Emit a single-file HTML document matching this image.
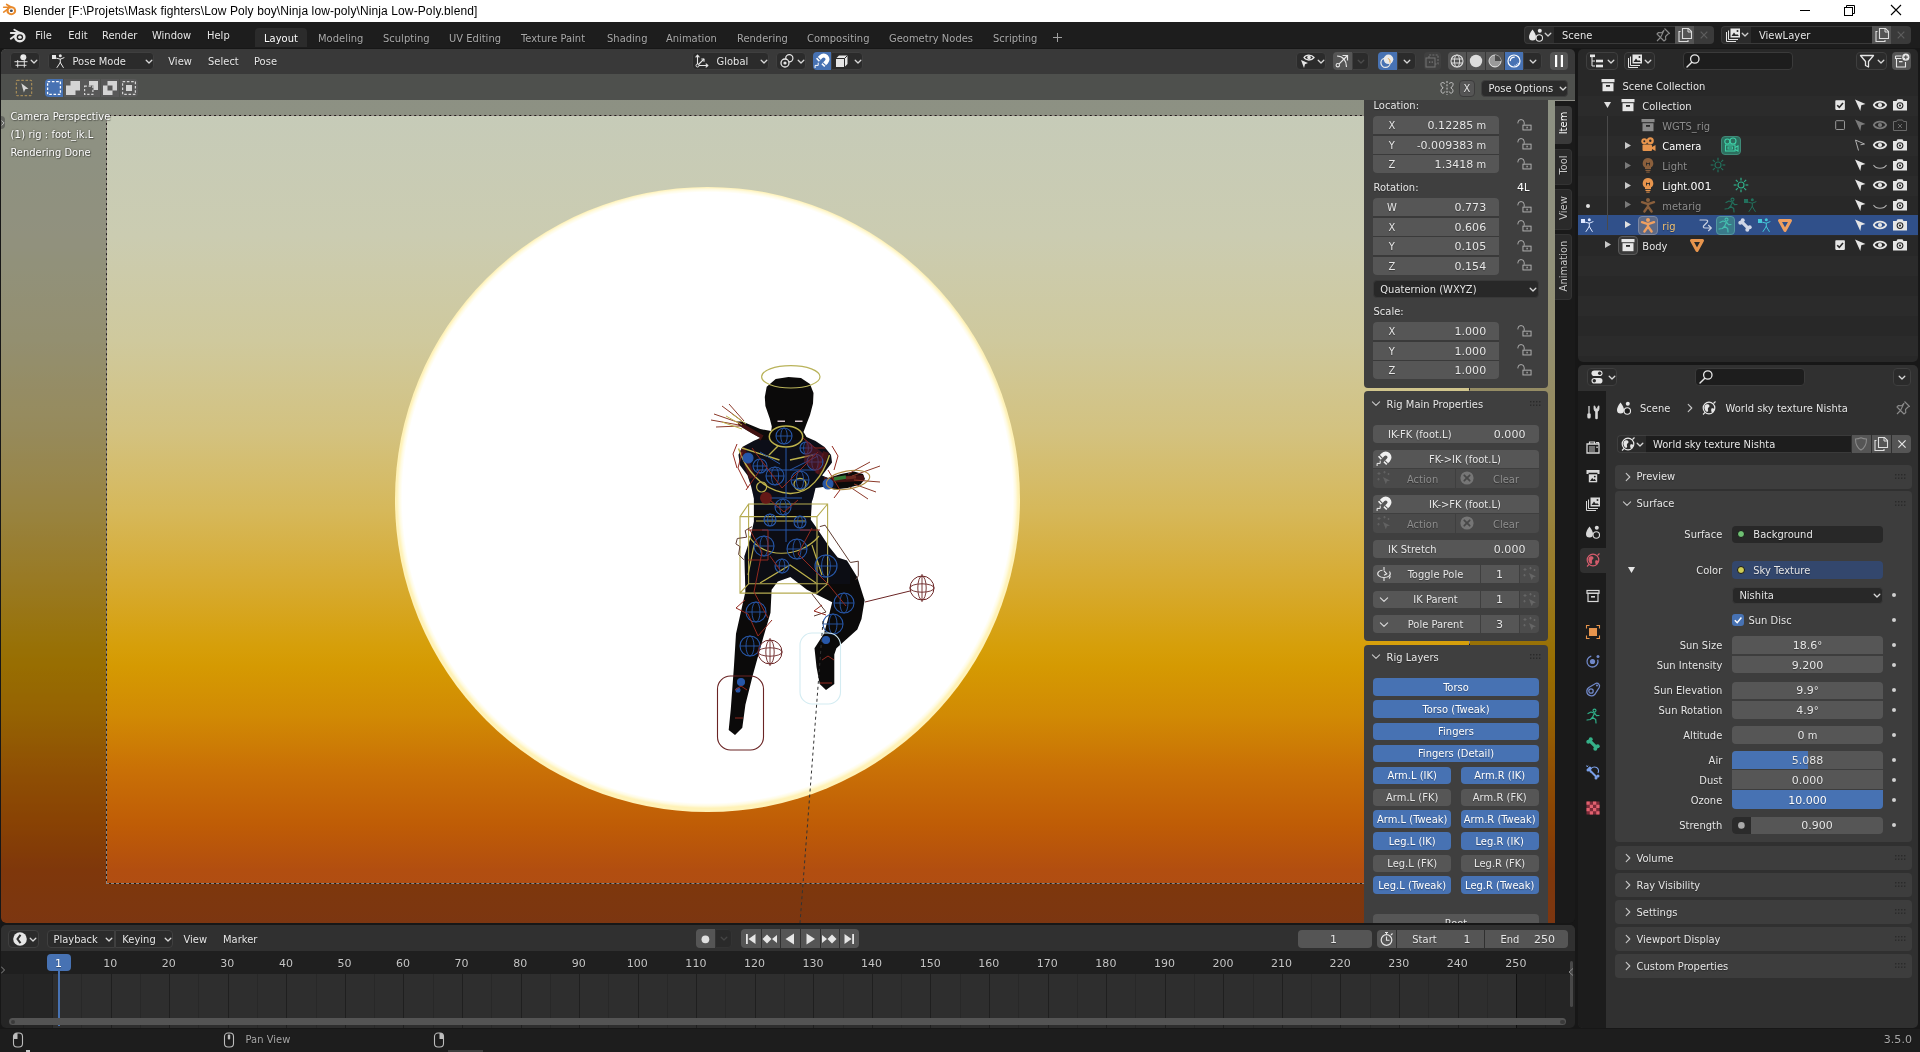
<!DOCTYPE html>
<html><head><meta charset="utf-8"><title>Blender</title>
<style>
html,body{margin:0;padding:0}
body{width:1920px;height:1052px;position:relative;overflow:hidden;background:#171717;font-family:'DejaVu Sans Condensed','DejaVu Sans',sans-serif;font-size:11px;font-stretch:condensed;color:#e6e6e6}
.a{position:absolute;box-sizing:border-box;display:block}
.n{font-family:'DejaVu Sans',sans-serif;font-stretch:normal}
.t{position:absolute;white-space:nowrap;letter-spacing:.04px;text-shadow:0 1px 1px rgba(0,0,0,.35)}
svg{overflow:visible}
</style></head><body><div id="root" style="position:absolute;left:0;top:0;width:1920px;height:1052px;will-change:transform">
<div class="a" style="left:0px;top:0px;width:1920px;height:22px;background:#ffffff;"></div><svg class="a" style="left:3.05px;top:2.85px;" width="13.5" height="13.5" viewBox="0 0 16 16"><path d="M4.3 1.7L11 5.6M0.8 5H8.500M0.8 10.800L6.300 6.800" fill="none" stroke="#e98a2c" stroke-width="1.900" stroke-linecap="round" stroke-linejoin="round"/><ellipse cx="9.800" cy="9.100" rx="5.800" ry="5.300" fill="#e98a2c"/><ellipse cx="9.900" cy="9.200" rx="3.200" ry="2.900" fill="#ffffff"/><ellipse cx="9.900" cy="9.200" rx="1.800" ry="1.600" fill="#3c4a5c"/></svg><div class="a" style="left:23px;top:1px;height:21px;line-height:21px;font-family:'Liberation Sans',sans-serif;font-size:12px;font-stretch:normal;color:#000;white-space:nowrap;letter-spacing:0.11px">Blender [F:\Projets\Mask fighters\Low Poly boy\Ninja low-poly\Ninja Low-Poly.blend]</div><svg class="a" style="left:1799px;top:4px;" width="12" height="12" viewBox="0 0 12 12"><path d="M1 6.500h10" stroke="#000" stroke-width="1"/></svg><svg class="a" style="left:1843px;top:3px;" width="14" height="14" viewBox="0 0 14 14"><rect x="1.500" y="4.500" width="8" height="8" fill="none" stroke="#000" stroke-width="1"/><path d="M3.500 4.500v-2h8v8h-2" fill="none" stroke="#000" stroke-width="1"/></svg><svg class="a" style="left:1890px;top:4px;" width="12" height="12" viewBox="0 0 12 12"><path d="M1 1l10 10M11 1L1 11" stroke="#000" stroke-width="1.100"/></svg><div class="a" style="left:0px;top:22px;width:1920px;height:26px;background:#1d1d1d;"></div><svg class="a" style="left:9.5px;top:27.5px;" width="16" height="16" viewBox="0 0 16 16"><path d="M4.3 1.7L11 5.6M0.8 5H8.500M0.8 10.800L6.300 6.800" fill="none" stroke="#e6e6e6" stroke-width="1.900" stroke-linecap="round" stroke-linejoin="round"/><ellipse cx="9.800" cy="9.100" rx="5.800" ry="5.300" fill="#e6e6e6"/><ellipse cx="9.900" cy="9.200" rx="3.200" ry="2.900" fill="#1d1d1d"/><ellipse cx="9.900" cy="9.200" rx="1.800" ry="1.600" fill="#e6e6e6"/></svg><div class="t" style="top:26.2px;height:20px;line-height:20px;left:35.3px;">File</div><div class="t" style="top:26.2px;height:20px;line-height:20px;left:68.3px;">Edit</div><div class="t" style="top:26.2px;height:20px;line-height:20px;left:102px;">Render</div><div class="t" style="top:26.2px;height:20px;line-height:20px;left:152px;">Window</div><div class="t" style="top:26.2px;height:20px;line-height:20px;left:207px;">Help</div><div class="a" style="left:255px;top:27.5px;width:52px;height:19.8px;background:#2b2b2b;border-radius:4px 4px 0 0;"></div><div class="t" style="top:29.3px;height:20px;line-height:20px;left:264px;color:#ffffff;">Layout</div><div class="t" style="top:29.3px;height:20px;line-height:20px;left:318px;color:#a8a8a8;">Modeling</div><div class="t" style="top:29.3px;height:20px;line-height:20px;left:383px;color:#a8a8a8;">Sculpting</div><div class="t" style="top:29.3px;height:20px;line-height:20px;left:449px;color:#a8a8a8;">UV Editing</div><div class="t" style="top:29.3px;height:20px;line-height:20px;left:521px;color:#a8a8a8;">Texture Paint</div><div class="t" style="top:29.3px;height:20px;line-height:20px;left:607px;color:#a8a8a8;">Shading</div><div class="t" style="top:29.3px;height:20px;line-height:20px;left:666px;color:#a8a8a8;">Animation</div><div class="t" style="top:29.3px;height:20px;line-height:20px;left:737px;color:#a8a8a8;">Rendering</div><div class="t" style="top:29.3px;height:20px;line-height:20px;left:807px;color:#a8a8a8;">Compositing</div><div class="t" style="top:29.3px;height:20px;line-height:20px;left:889px;color:#a8a8a8;">Geometry Nodes</div><div class="t" style="top:29.3px;height:20px;line-height:20px;left:993px;color:#a8a8a8;">Scripting</div><svg class="a" style="left:1051.5px;top:32px;" width="11" height="11" viewBox="0 0 11 11"><path d="M5.500 1v9M1 5.500h9" stroke="#a0a0a0" stroke-width="1"/></svg><div class="a" style="left:1524px;top:26px;width:30px;height:18px;background:#2b2b2b;border-radius:4px 0 0 4px;border:1px solid #3a3a3a;border-right:none;"></div><svg class="a" style="left:1527.5px;top:27px;" width="16" height="16" viewBox="0 0 16 16"><path d="M4.500 1.500C7 5 8 7 8 9a3.500 3.500 0 0 1-7 0c0-2 1-4 3.500-7.500z" fill="#e6e6e6" transform="translate(0 1)"/><circle cx="11.800" cy="3.800" r="2" fill="#e6e6e6"/><circle cx="11.300" cy="11" r="3.200" fill="#1d1d1d" stroke="#e6e6e6" stroke-width="1.100"/></svg><svg class="a" style="left:1542.5px;top:31.3px;" width="10" height="8" viewBox="0 0 10 8"><path d="M2.2 2.2L5 5.0L7.8 2.2" fill="none" stroke="#d0d0d0" stroke-width="1.3" stroke-linecap="round" stroke-linejoin="round"/></svg><div class="a" style="left:1554px;top:26px;width:120.5px;height:18px;background:#1d1d1d;border:1px solid #3a3a3a;border-left:none;border-right:none;"></div><div class="t" style="top:26px;height:20px;line-height:20px;left:1562px;">Scene</div><svg class="a" style="left:1654.5px;top:27px;" width="16" height="16" viewBox="0 0 16 16"><path d="M9.500 1.500l5 5-1.500.5-2.500 2.500.3 3L9 14 5.500 10.500 2 14M5.500 10.500L2 7l1.500-1.500 3 .3L9 3.300z" fill="none" stroke="#8a8a8a" stroke-width="1.100" stroke-linejoin="round"/></svg><div class="a" style="left:1674.5px;top:26px;width:19.5px;height:18px;background:#545454;"></div><svg class="a" style="left:1676.5px;top:27px;" width="16" height="16" viewBox="0 0 16 16"><path d="M5.500 1.500h6l3 3v7h-9z" fill="none" stroke="#dddddd" stroke-width="1.100"/><path d="M11 1.500v3.500h3.500" fill="none" stroke="#dddddd" stroke-width="1"/><path d="M3.500 4.500H2v10h9v-1.500" fill="none" stroke="#dddddd" stroke-width="1.100"/></svg><div class="a" style="left:1694.3px;top:26px;width:19.5px;height:18px;background:#3a3a3a;border-radius:0 4px 4px 0;"></div><svg class="a" style="left:1696px;top:27px;" width="16" height="16" viewBox="0 0 16 16"><path d="M4.7 4.7L11.3 11.3M11.3 4.7L4.7 11.3" stroke="#5e5e5e" stroke-width="1.2"/></svg><div class="a" style="left:1721px;top:26px;width:30px;height:18px;background:#2b2b2b;border-radius:4px 0 0 4px;border:1px solid #3a3a3a;border-right:none;"></div><svg class="a" style="left:1724.5px;top:27px;" width="16" height="16" viewBox="0 0 16 16"><path d="M1.500 5v9.500H11M3.500 3.500v9H13" fill="none" stroke="#e6e6e6" stroke-width="1"/><rect x="5.500" y="1.500" width="9.500" height="9" fill="#e6e6e6"/><path d="M6.500 9l2.500-3.500 2 2.500 1-1 2 2z" fill="#282828"/><circle cx="12.500" cy="4" r="1" fill="#282828"/></svg><svg class="a" style="left:1739.5px;top:31.3px;" width="10" height="8" viewBox="0 0 10 8"><path d="M2.2 2.2L5 5.0L7.8 2.2" fill="none" stroke="#d0d0d0" stroke-width="1.3" stroke-linecap="round" stroke-linejoin="round"/></svg><div class="a" style="left:1751px;top:26px;width:120.5px;height:18px;background:#1d1d1d;border:1px solid #3a3a3a;border-left:none;border-right:none;"></div><div class="t" style="top:26px;height:20px;line-height:20px;left:1759px;">ViewLayer</div><div class="a" style="left:1871.5px;top:26px;width:19.5px;height:18px;background:#545454;"></div><svg class="a" style="left:1873.5px;top:27px;" width="16" height="16" viewBox="0 0 16 16"><path d="M5.500 1.500h6l3 3v7h-9z" fill="none" stroke="#dddddd" stroke-width="1.100"/><path d="M11 1.500v3.500h3.500" fill="none" stroke="#dddddd" stroke-width="1"/><path d="M3.500 4.500H2v10h9v-1.500" fill="none" stroke="#dddddd" stroke-width="1.100"/></svg><div class="a" style="left:1891.3px;top:26px;width:19.5px;height:18px;background:#3a3a3a;border-radius:0 4px 4px 0;"></div><svg class="a" style="left:1893px;top:27px;" width="16" height="16" viewBox="0 0 16 16"><path d="M4.7 4.7L11.3 11.3M11.3 4.7L4.7 11.3" stroke="#5e5e5e" stroke-width="1.2"/></svg><div class="a" id="vp" style="left:1px;top:48.5px;width:1574px;height:874.0px;border-radius:5px;overflow:hidden;background:#1a1a1a"><div class="a" style="left:0;top:0;width:1554.5px;height:874.0px;border-radius:5px 0 0 5px;background:linear-gradient(to bottom,#c4c9b9 0px,#c6cbb8 115px,#cbccb1 235px,#cfc99d 340px,#d3c280 430px,#d6b85a 510px,#d7ab32 580px,#d69f0a 645px,#d59a02 665px,#d18a04 715px,#c97006 770px,#bf5c06 825px,#b24e10 870px,#ae4c18 923px);background-size:100% 923px;background-position:0 -48.5px"></div><div class="a" style="left:-1px;top:-48.5px;width:1920px;height:1052px"><div class="a" style="left:0px;top:48px;width:106px;height:875px;background:rgba(0,0,0,.285);"></div><div class="a" style="left:106px;top:48px;width:1500px;height:67px;background:rgba(0,0,0,.285);"></div><div class="a" style="left:106px;top:883.5px;width:1500px;height:40px;background:rgba(0,0,0,.285);"></div><div class="a" style="left:1469.5px;top:115px;width:140px;height:768.5px;background:rgba(0,0,0,.285);"></div><div class="a" style="left:105.5px;top:114.5px;width:1364.5px;height:769.5px;border:1px solid #1e1a18;"></div><div class="a" style="left:105.5px;top:114.5px;width:1364.5px;height:769.5px;border:1px dashed rgba(255,244,236,.5);"></div><div class="a" style="left:395.2px;top:187.3px;width:624.6px;height:624.6px;border-radius:50%;background:radial-gradient(circle closest-side at 50% 49.700%,#fff 0,#fff 98.300%,#fffbe2 99.200%,#fff2b8 100%)"></div><svg class="a" style="left:0px;top:0px;" width="1920" height="1052" viewBox="0 0 1920 1052"><path d="M788.5 377 L801 378 L810 384 L813.5 393 L813 403.5 L810 415 L806.5 424 L803.5 432 L806.5 437 L815.5 441 L824.5 447 L831 455 L832 462.5 L827 469 L822 475.5 L828 478 L841 474 L854 471.5 L863 474 L865 479 L860.5 484.5 L847.5 488 L834.5 489.5 L823 487 L815.5 488 L813 498.5 L811.8 501.7 L810.8 519.7 L817.7 529.6 L829.7 547.6 L837.7 557.6 L846.9 560.5 L857.3 577.2 L864.6 600.2 L861.5 619 L857.3 629.5 L836.4 648.3 L834.3 654.6 L834.3 683.9 L826 690 L819.7 683.9 L816.5 667 L814.5 648.3 L823.9 633.7 L828 619 L832.2 602.3 L807 589.7 L790.4 577 L777.8 581.4 L771.6 589.7 L770.5 612.7 L763.2 637.8 L752.7 675.5 L745.4 704.8 L742.3 727.8 L735 735 L728.7 730 L730.8 709 L733.9 667 L736 633.7 L745.4 591.8 L744.4 556.3 L749.9 539.6 L753.9 521.7 L753.9 498.4 L751.3 487 L747.5 475.3 L739.8 465 L738.5 454.8 L742.3 447.1 L753.9 440.7 L760.3 438.1 L751.3 433 L738.5 425.3 L737.2 421.4 L742.3 421.4 L751.3 425.3 L760.3 429.1 L771.2 431.1 L771.8 426.6 L769.9 418.9 L765.4 406 L764.8 397.1 L766.7 386.8 L775.7 379.1 Z" fill="#0b0a0a"/><clipPath id="bd"><path d="M788.5 377 L801 378 L810 384 L813.5 393 L813 403.5 L810 415 L806.5 424 L803.5 432 L806.5 437 L815.5 441 L824.5 447 L831 455 L832 462.5 L827 469 L822 475.5 L828 478 L841 474 L854 471.5 L863 474 L865 479 L860.5 484.5 L847.5 488 L834.5 489.5 L823 487 L815.5 488 L813 498.5 L811.8 501.7 L810.8 519.7 L817.7 529.6 L829.7 547.6 L837.7 557.6 L846.9 560.5 L857.3 577.2 L864.6 600.2 L861.5 619 L857.3 629.5 L836.4 648.3 L834.3 654.6 L834.3 683.9 L826 690 L819.7 683.9 L816.5 667 L814.5 648.3 L823.9 633.7 L828 619 L832.2 602.3 L807 589.7 L790.4 577 L777.8 581.4 L771.6 589.7 L770.5 612.7 L763.2 637.8 L752.7 675.5 L745.4 704.8 L742.3 727.8 L735 735 L728.7 730 L730.8 709 L733.9 667 L736 633.7 L745.4 591.8 L744.4 556.3 L749.9 539.6 L753.9 521.7 L753.9 498.4 L751.3 487 L747.5 475.3 L739.8 465 L738.5 454.8 L742.3 447.1 L753.9 440.7 L760.3 438.1 L751.3 433 L738.5 425.3 L737.2 421.4 L742.3 421.4 L751.3 425.3 L760.3 429.1 L771.2 431.1 L771.8 426.6 L769.9 418.9 L765.4 406 L764.8 397.1 L766.7 386.8 L775.7 379.1 Z"/></clipPath><g clip-path="url(#bd)"><path d="M736 440h100v70h-100z" fill="#12245a" opacity=".18"/><path d="M740 518h110v66h-110z" fill="#14224c" opacity=".16"/><path d="M742 448l10 30M826 452l-8 22M762 438l-24-14M824 480l40-2" stroke="#5a1614" stroke-width="6" opacity=".7" fill="none"/></g><path d="M777.500 421.300h7.500M795 421.300h7.500" stroke="#d8c4cc" stroke-width="1.400"/><ellipse cx="790.800" cy="376.800" rx="29.200" ry="11.200" fill="none" stroke="#b9b35a" stroke-width="1.200"/><ellipse cx="786" cy="436.500" rx="16.700" ry="10.500" fill="none" stroke="#bdb24c" stroke-width="1.500"/><path d="M738.500 448.500C745 468 762 492 790 493.500c20 .5 33-18 39.500-38.500M742 448l37.500 12M778 446l-9 9M790 460l23-5" fill="none" stroke="#bdb24c" stroke-width="1.400"/><circle cx="761.600" cy="487" r="5" fill="none" stroke="#bdb24c" stroke-width="1.200"/><circle cx="800" cy="484.300" r="6" fill="none" stroke="#bdb24c" stroke-width="1.200"/><path d="M740 516.600h77v76.500h-77zM748.600 504h79v79.800h-79zM740 516.600l8.600-12.600M817 516.600l10.600-12.600M740 593l8.600-9.200M817 593l10.600-9.200" fill="none" stroke="#b5ab50" stroke-width="1.100"/><path d="M819.800 526.600l5.300-1.400 25.300 37.300 7.900-1.300v14.600l-2.600 4M751.900 526.600l-6.700 4 1.400 6.600-9.300 1.300-1.400 5.400 4 2.600-1.300 8 5.300 5.300M812 594l14 18-12 4" fill="none" stroke="#5e3c32" stroke-width="1"/><path d="M749 536c12 22 50 24 70 0M754 545l-6 30M812 545l10 30M760 583l30-18 26 18M756 521h50" fill="none" stroke="#bdb24c" stroke-width="1.200"/><circle cx="784" cy="436" r="8" fill="none" stroke="#2757a8" stroke-width="1.100"/><ellipse cx="784" cy="436" rx="3.2" ry="8" fill="none" stroke="#2757a8" stroke-width=".9"/><path d="M776 436h16" stroke="#2757a8" stroke-width=".9"/><circle cx="775" cy="476" r="9" fill="none" stroke="#2757a8" stroke-width="1.100"/><ellipse cx="775" cy="476" rx="3.6" ry="9" fill="none" stroke="#2757a8" stroke-width=".9"/><path d="M766 476h18" stroke="#2757a8" stroke-width=".9"/><circle cx="800" cy="480" r="9" fill="none" stroke="#2757a8" stroke-width="1.100"/><ellipse cx="800" cy="480" rx="3.6" ry="9" fill="none" stroke="#2757a8" stroke-width=".9"/><path d="M791 480h18" stroke="#2757a8" stroke-width=".9"/><circle cx="760" cy="466" r="7" fill="none" stroke="#2757a8" stroke-width="1.100"/><ellipse cx="760" cy="466" rx="2.8" ry="7" fill="none" stroke="#2757a8" stroke-width=".9"/><path d="M753 466h14" stroke="#2757a8" stroke-width=".9"/><circle cx="815" cy="462" r="8" fill="none" stroke="#2757a8" stroke-width="1.100"/><ellipse cx="815" cy="462" rx="3.2" ry="8" fill="none" stroke="#2757a8" stroke-width=".9"/><path d="M807 462h16" stroke="#2757a8" stroke-width=".9"/><circle cx="806" cy="448" r="6" fill="none" stroke="#2757a8" stroke-width="1.100"/><ellipse cx="806" cy="448" rx="2.4" ry="6" fill="none" stroke="#2757a8" stroke-width=".9"/><path d="M800 448h12" stroke="#2757a8" stroke-width=".9"/><circle cx="783" cy="507" r="8" fill="none" stroke="#2757a8" stroke-width="1.100"/><ellipse cx="783" cy="507" rx="3.2" ry="8" fill="none" stroke="#2757a8" stroke-width=".9"/><path d="M775 507h16" stroke="#2757a8" stroke-width=".9"/><circle cx="764" cy="546" r="10" fill="none" stroke="#2757a8" stroke-width="1.100"/><ellipse cx="764" cy="546" rx="4.0" ry="10" fill="none" stroke="#2757a8" stroke-width=".9"/><path d="M754 546h20" stroke="#2757a8" stroke-width=".9"/><circle cx="797" cy="549" r="10" fill="none" stroke="#2757a8" stroke-width="1.100"/><ellipse cx="797" cy="549" rx="4.0" ry="10" fill="none" stroke="#2757a8" stroke-width=".9"/><path d="M787 549h20" stroke="#2757a8" stroke-width=".9"/><circle cx="782" cy="566" r="7" fill="none" stroke="#2757a8" stroke-width="1.100"/><ellipse cx="782" cy="566" rx="2.8" ry="7" fill="none" stroke="#2757a8" stroke-width=".9"/><path d="M775 566h14" stroke="#2757a8" stroke-width=".9"/><circle cx="826" cy="566" r="11" fill="none" stroke="#2757a8" stroke-width="1.100"/><ellipse cx="826" cy="566" rx="4.4" ry="11" fill="none" stroke="#2757a8" stroke-width=".9"/><path d="M815 566h22" stroke="#2757a8" stroke-width=".9"/><circle cx="756" cy="612" r="10" fill="none" stroke="#2757a8" stroke-width="1.100"/><ellipse cx="756" cy="612" rx="4.0" ry="10" fill="none" stroke="#2757a8" stroke-width=".9"/><path d="M746 612h20" stroke="#2757a8" stroke-width=".9"/><circle cx="750" cy="646" r="10" fill="none" stroke="#2757a8" stroke-width="1.100"/><ellipse cx="750" cy="646" rx="4.0" ry="10" fill="none" stroke="#2757a8" stroke-width=".9"/><path d="M740 646h20" stroke="#2757a8" stroke-width=".9"/><circle cx="844" cy="603" r="10" fill="none" stroke="#2757a8" stroke-width="1.100"/><ellipse cx="844" cy="603" rx="4.0" ry="10" fill="none" stroke="#2757a8" stroke-width=".9"/><path d="M834 603h20" stroke="#2757a8" stroke-width=".9"/><circle cx="833" cy="624" r="10" fill="none" stroke="#2757a8" stroke-width="1.100"/><ellipse cx="833" cy="624" rx="4.0" ry="10" fill="none" stroke="#2757a8" stroke-width=".9"/><path d="M823 624h20" stroke="#2757a8" stroke-width=".9"/><circle cx="741" cy="682" r="3.5" fill="none" stroke="#2757a8" stroke-width="1.100"/><circle cx="741" cy="682" r="3.5" fill="#2757a8"/><circle cx="826" cy="640" r="3.5" fill="none" stroke="#2757a8" stroke-width="1.100"/><circle cx="826" cy="640" r="3.5" fill="#2757a8"/><circle cx="738" cy="690" r="2" fill="none" stroke="#2757a8" stroke-width="1.100"/><circle cx="738" cy="690" r="2" fill="#2757a8"/><circle cx="770" cy="520" r="6" fill="none" stroke="#2757a8" stroke-width="1.100"/><ellipse cx="770" cy="520" rx="2.4" ry="6" fill="none" stroke="#2757a8" stroke-width=".9"/><path d="M764 520h12" stroke="#2757a8" stroke-width=".9"/><circle cx="800" cy="522" r="6" fill="none" stroke="#2757a8" stroke-width="1.100"/><ellipse cx="800" cy="522" rx="2.4" ry="6" fill="none" stroke="#2757a8" stroke-width=".9"/><path d="M794 522h12" stroke="#2757a8" stroke-width=".9"/><circle cx="748" cy="458" r="5" fill="none" stroke="#2757a8" stroke-width="1.100"/><circle cx="748" cy="458" r="5" fill="#2757a8"/><circle cx="828" cy="484" r="5" fill="none" stroke="#2757a8" stroke-width="1.100"/><circle cx="828" cy="484" r="5" fill="#2757a8"/><path d="M756 470h60M786 448v50M760 452l20 12M790 470l28-14M770 498h32M762 530h48M786 512v30" stroke="#2757a8" stroke-width="1" fill="none"/><path d="M742 452l-4 16 10 20M752 448l30 40 36-36M770 500l14 12 14-12M750 530l12 22-8 40 14 26M812 528l-14 26 30 30 18 22M745 600l-9 8 12 6 10 22 14-16M822 605l-8 6 12 4M735 690l6-4 6 4M735 718h8M822 660l6-4 6 4M820 683h12M760 470l-14 20M828 470l12 20-6 8M737 444l-4 10 4 14M832 446l6 10-4 14M803 438l12 10 10 0M748 530h20v30h-20M800 530h20M770 556l10 14" fill="none" stroke="#93291f" stroke-width="1"/><circle cx="766" cy="498" r="6" fill="#7a1c16" opacity=".8"/><path d="M806 440l18 14-6 20-14-12z" fill="#6a1a2a" opacity=".55"/><path d="M711 420l28 5M714 414l26 9M722 406l20 15M729 404l15 17M716 427l24-1" stroke="#8c3a2a" stroke-width="1"/><path d="M722 422l20 7M726 416l16 9M732 414l14 10" stroke="#bdb24c" stroke-width="1"/><path d="M852 476l28-10M854 480l26 2M854 484l22 8M850 487l18 12M848 474l22-12" stroke="#8c3a2a" stroke-width="1"/><ellipse cx="848" cy="480" rx="22" ry="9" fill="none" stroke="#b08a40" stroke-width="1.100" transform="rotate(-10 848 480)"/><path d="M834 479l12-2" stroke="#2f7a34" stroke-width="3.500"/><path d="M846 478l10-1" stroke="#6a2a20" stroke-width="3"/><circle cx="922" cy="588" r="12" fill="none" stroke="#6a2424" stroke-width="1"/><ellipse cx="922" cy="588" rx="4.2" ry="12" fill="none" stroke="#6a2424" stroke-width=".9"/><ellipse cx="922" cy="588" rx="12" ry="4.2" fill="none" stroke="#6a2424" stroke-width=".9"/><path d="M922 574v28" stroke="#6a2424" stroke-width=".9"/><circle cx="770" cy="652" r="12" fill="none" stroke="#6a2424" stroke-width="1"/><ellipse cx="770" cy="652" rx="4.2" ry="12" fill="none" stroke="#6a2424" stroke-width=".9"/><ellipse cx="770" cy="652" rx="12" ry="4.2" fill="none" stroke="#6a2424" stroke-width=".9"/><path d="M770 638v28" stroke="#6a2424" stroke-width=".9"/><path d="M865 602L910 591" stroke="#6a2424" stroke-width="1"/><rect x="717.500" y="676" width="46" height="74" rx="13" fill="none" stroke="#6a2424" stroke-width="1.100"/><rect x="800" y="633" width="40.500" height="71" rx="12" fill="none" stroke="#d4ecf2" stroke-width="1.100"/><path d="M823 621L800 923" stroke="#333" stroke-width="1" stroke-dasharray="3 3"/></svg><div class="a" style="left:0px;top:48px;width:1576px;height:26.3px;background:#393939;"></div><div class="a" style="left:0px;top:74.3px;width:1576px;height:25.9px;background:#4e504d;"></div><div class="a" style="left:10.3px;top:52px;width:29.7px;height:18px;background:#2b2b2b;border-radius:4px;border:1px solid #3f3f3f;"></div><svg class="a" style="left:12.5px;top:53px;" width="16" height="16" viewBox="0 0 16 16"><path d="M1.500 8.700h13M2.500 12.300h11M4.700 7v7.500M11.300 7v7.500" stroke="#e6e6e6" stroke-width=".95" fill="none"/><circle cx="10.300" cy="4.300" r="3" fill="#e6e6e6"/><circle cx="9.500" cy="3.500" r="1.100" fill="#ffffff" opacity=".55"/></svg><svg class="a" style="left:29.3px;top:57.6px;" width="10" height="8" viewBox="0 0 10 8"><path d="M2.2 2.2L5 5.0L7.8 2.2" fill="none" stroke="#d8d8d8" stroke-width="1.3" stroke-linecap="round" stroke-linejoin="round"/></svg><div class="a" style="left:47.5px;top:52px;width:106.5px;height:18px;background:#2b2b2b;border-radius:4px;border:1px solid #3f3f3f;"></div><svg class="a" style="left:50.5px;top:52.8px;" width="16" height="16" viewBox="0 0 16 16"><rect x="1" y="2" width="4" height="4" fill="#e6e6e6"/><circle cx="9.3" cy="2.7" r="1.5" fill="#e6e6e6"/><path d="M5.5 5.2l3.8 1 3.7-1.5M9.3 6.2v3.3M9.3 9.5l-3.3 5M9.3 9.5l3 5" stroke="#e6e6e6" stroke-width="1" fill="none" stroke-linecap="round"/></svg><div class="t" style="top:52px;height:20px;line-height:20px;left:72.5px;">Pose Mode</div><svg class="a" style="left:143.8px;top:57.6px;" width="10" height="8" viewBox="0 0 10 8"><path d="M2.2 2.2L5 5.0L7.8 2.2" fill="none" stroke="#d8d8d8" stroke-width="1.3" stroke-linecap="round" stroke-linejoin="round"/></svg><div class="t" style="top:52px;height:20px;line-height:20px;left:168.3px;">View</div><div class="t" style="top:52px;height:20px;line-height:20px;left:208px;">Select</div><div class="t" style="top:52px;height:20px;line-height:20px;left:254px;">Pose</div><div class="a" style="left:691.5px;top:52px;width:77px;height:18px;background:#2b2b2b;border-radius:4px;border:1px solid #3f3f3f;"></div><svg class="a" style="left:694px;top:53px;" width="16" height="16" viewBox="0 0 16 16"><path d="M3.5 12.5V2.5M3.5 12.5H13.5M3.5 12.5L10 6" stroke="#e6e6e6" stroke-width="1.1" fill="none"/><path d="M1.6 4.3L3.5 2 5.4 4.3M11.7 10.6l2.2 1.9-2.2 1.9M7.3 6H10v2.7" stroke="#e6e6e6" stroke-width="1.1" fill="none" stroke-linejoin="round"/><circle cx="3.5" cy="12.5" r="1.5" fill="#2b2b2b" stroke="#e6e6e6" stroke-width="1"/></svg><div class="t" style="top:52px;height:20px;line-height:20px;left:716.5px;">Global</div><svg class="a" style="left:758.5px;top:57.6px;" width="10" height="8" viewBox="0 0 10 8"><path d="M2.2 2.2L5 5.0L7.8 2.2" fill="none" stroke="#d8d8d8" stroke-width="1.3" stroke-linecap="round" stroke-linejoin="round"/></svg><div class="a" style="left:776px;top:52px;width:29.5px;height:18px;background:#2b2b2b;border-radius:4px;border:1px solid #3f3f3f;"></div><svg class="a" style="left:778.8px;top:53px;" width="16" height="16" viewBox="0 0 16 16"><circle cx="10.3" cy="5.3" r="3.6" fill="none" stroke="#e6e6e6" stroke-width="1.2"/><circle cx="6" cy="10" r="4" fill="#2b2b2b" stroke="#e6e6e6" stroke-width="1.3"/><circle cx="6" cy="10" r="1.6" fill="#e6e6e6"/></svg><svg class="a" style="left:795.5px;top:57.6px;" width="10" height="8" viewBox="0 0 10 8"><path d="M2.2 2.2L5 5.0L7.8 2.2" fill="none" stroke="#d8d8d8" stroke-width="1.3" stroke-linecap="round" stroke-linejoin="round"/></svg><div class="a" style="left:813px;top:52px;width:18px;height:18px;background:#4772b3;border-radius:4px 0 0 4px;"></div><svg class="a" style="left:814px;top:53px;" width="16" height="16" viewBox="0 0 16 16"><g transform="rotate(45 9.700 6.300)"><path d="M5.900 11.400V6.300a3.800 3.800 0 0 1 7.600 0V11.400" fill="none" stroke="#ffffff" stroke-width="4"/><path d="M3.700 9.300h4.400M11.300 9.300h4.400" stroke="#4772b3" stroke-width="1.100"/></g><path d="M1.100 15v-2.600h3.100v-2.700" fill="none" stroke="#ffffff" stroke-width="1"/></svg><div class="a" style="left:831px;top:52px;width:32px;height:18px;background:#2b2b2b;border-radius:0 4px 4px 0;border:1px solid #3f3f3f;"></div><svg class="a" style="left:834px;top:53px;" width="16" height="16" viewBox="0 0 16 16"><path d="M2 5.5h8.5V14H2z" fill="#e6e6e6"/><path d="M2 5.5L5 2.5h8.5L10.5 5.5z" fill="#e6e6e6"/><path d="M10.5 5.5l3-3V11l-3 3z" fill="#e6e6e6"/><path d="M2 5.5h8.5V14M10.5 5.5l3-3" fill="none" stroke="#2b2b2b" stroke-width="1"/></svg><svg class="a" style="left:852.5px;top:57.6px;" width="10" height="8" viewBox="0 0 10 8"><path d="M2.2 2.2L5 5.0L7.8 2.2" fill="none" stroke="#d8d8d8" stroke-width="1.3" stroke-linecap="round" stroke-linejoin="round"/></svg><div class="a" style="left:1296px;top:52px;width:30px;height:18px;background:#2b2b2b;border-radius:4px;border:1px solid #3f3f3f;"></div><svg class="a" style="left:1299px;top:53px;" width="16" height="16" viewBox="0 0 16 16"><path d="M5 4.5C7 1.2 12.5 1.2 15 4.5 12.5 7.8 7 7.8 5 4.5z" fill="none" stroke="#e6e6e6" stroke-width="1.3"/><circle cx="10" cy="4.4" r="1.8" fill="#e6e6e6"/><path d="M2 7l7 3-3 1.2L5 15z" fill="#e6e6e6"/></svg><svg class="a" style="left:1315.5px;top:57.6px;" width="10" height="8" viewBox="0 0 10 8"><path d="M2.2 2.2L5 5.0L7.8 2.2" fill="none" stroke="#d8d8d8" stroke-width="1.3" stroke-linecap="round" stroke-linejoin="round"/></svg><div class="a" style="left:1333px;top:52px;width:18.5px;height:18px;background:#555555;border-radius:4px 0 0 4px;"></div><svg class="a" style="left:1334.3px;top:53px;" width="16" height="16" viewBox="0 0 16 16"><path d="M3 3c6 0 9.5 4.5 9.5 11" fill="none" stroke="#e6e6e6" stroke-width="1.2"/><path d="M4.2 11.8L13 3M8.5 2.5h5v5" fill="none" stroke="#e6e6e6" stroke-width="1.2"/><circle cx="3.8" cy="12.2" r="1.7" fill="#505050" stroke="#e6e6e6" stroke-width="1.1"/></svg><div class="a" style="left:1351.5px;top:52px;width:17px;height:18px;background:#2b2b2b;border-radius:0 4px 4px 0;border:1px solid #3f3f3f;"></div><svg class="a" style="left:1355.5px;top:57.6px;" width="10" height="8" viewBox="0 0 10 8"><path d="M2.2 2.2L5 5.0L7.8 2.2" fill="none" stroke="#4c4c4c" stroke-width="1.3" stroke-linecap="round" stroke-linejoin="round"/></svg><div class="a" style="left:1377.5px;top:52px;width:19px;height:18px;background:#4772b3;border-radius:4px 0 0 4px;"></div><svg class="a" style="left:1379px;top:53px;" width="16" height="16" viewBox="0 0 16 16"><circle cx="9.5" cy="6.3" r="4.8" fill="#e9e9e9"/><circle cx="6.5" cy="9.8" r="4.6" fill="none" stroke="#e9e9e9" stroke-width="1.2"/><path d="M9.2 5.3a4.7 4.7 0 0 1 1.9 4.4" stroke="#e0a040" stroke-width="1" fill="none"/></svg><div class="a" style="left:1396.5px;top:52px;width:19.5px;height:18px;background:#2b2b2b;border-radius:0 4px 4px 0;border:1px solid #3f3f3f;"></div><svg class="a" style="left:1401.5px;top:57.6px;" width="10" height="8" viewBox="0 0 10 8"><path d="M2.2 2.2L5 5.0L7.8 2.2" fill="none" stroke="#d8d8d8" stroke-width="1.3" stroke-linecap="round" stroke-linejoin="round"/></svg><div class="a" style="left:1423.5px;top:52px;width:17px;height:18px;background:#404040;border-radius:4px;"></div><svg class="a" style="left:1424px;top:53px;" width="16" height="16" viewBox="0 0 16 16"><rect x="2" y="5" width="9" height="9" fill="none" stroke="#707070" stroke-width="1.1"/><path d="M5 5V2h9v9h-3" fill="none" stroke="#707070" stroke-width="1.1" stroke-dasharray="2 1.2"/><rect x="5" y="8.3" width="1.3" height="1.6" fill="#707070"/><rect x="7.6" y="8.3" width="1.3" height="1.6" fill="#707070"/></svg><div class="a" style="left:1447.8px;top:52px;width:18.1px;height:18px;background:#555555;border-radius:4px 0 0 4px;"></div><svg class="a" style="left:1449px;top:53px;" width="16" height="16" viewBox="0 0 16 16"><circle cx="8" cy="8" r="6" fill="none" stroke="#dcdcdc" stroke-width="1.1"/><ellipse cx="8" cy="8" rx="2.6" ry="6" fill="none" stroke="#dcdcdc" stroke-width="1"/><path d="M2.3 6h11.4M2.3 10h11.4" stroke="#dcdcdc" stroke-width="1" fill="none"/></svg><div class="a" style="left:1466.7px;top:52px;width:18.1px;height:18px;background:#555555;border-radius:0;"></div><svg class="a" style="left:1467.9px;top:53px;" width="16" height="16" viewBox="0 0 16 16"><circle cx="8" cy="8" r="6.2" fill="#dcdcdc"/></svg><div class="a" style="left:1485.6px;top:52px;width:18.1px;height:18px;background:#555555;border-radius:0;"></div><svg class="a" style="left:1486.8px;top:53px;" width="16" height="16" viewBox="0 0 16 16"><circle cx="8" cy="8" r="6" fill="#9a9a9a" stroke="#dcdcdc" stroke-width="1"/><path d="M8 2a6 6 0 0 1 6 6l-6 .0z" fill="#4a4a4a"/><path d="M2.5 9.5a5.6 5.6 0 0 0 8 4 7 7 0 0 1-8-4z" fill="#f0f0f0"/></svg><div class="a" style="left:1504.5px;top:52px;width:18.1px;height:18px;background:#4772b3;border-radius:0;"></div><svg class="a" style="left:1505.7px;top:53px;" width="16" height="16" viewBox="0 0 16 16"><circle cx="8" cy="8" r="6" fill="#4772b3" stroke="#fff" stroke-width="1.2"/><path d="M4.3 7.5a4 4 0 0 1 4-3.4" stroke="#fff" stroke-width="1.3" fill="none" stroke-linecap="round"/><path d="M8.5 12.8a5 5 0 0 0 4.2-4" stroke="#cfe0ff" stroke-width="1.6" fill="none" stroke-dasharray="1 1"/></svg><div class="a" style="left:1523.4px;top:52px;width:19px;height:18px;background:#2b2b2b;border-radius:0 4px 4px 0;border:1px solid #3f3f3f;"></div><svg class="a" style="left:1528px;top:57.6px;" width="10" height="8" viewBox="0 0 10 8"><path d="M2.2 2.2L5 5.0L7.8 2.2" fill="none" stroke="#d8d8d8" stroke-width="1.3" stroke-linecap="round" stroke-linejoin="round"/></svg><div class="a" style="left:1550px;top:52px;width:18px;height:18px;background:#555555;border-radius:4px;"></div><svg class="a" style="left:1551px;top:53px;" width="16" height="16" viewBox="0 0 16 16"><rect x="4" y="2" width="2.2" height="12" fill="#fff"/><rect x="9.8" y="2" width="2.2" height="12" fill="#fff"/></svg><svg class="a" style="left:14.8px;top:78.8px;" width="18" height="18" viewBox="0 0 18 18"><rect x="1.3" y="1.3" width="15.4" height="15.4" rx="0.8" fill="none" stroke="#c4a05c" stroke-width="1" stroke-dasharray="2.5 1.7" opacity=".9"/><path d="M6.3 4.3l7.2 5.4-3.3.5-1.300 3.300z" fill="#d4d4d4"/></svg><div class="a" style="left:45px;top:79px;width:18px;height:18px;background:#4772b3;border-radius:4px 0 0 4px;"></div><svg class="a" style="left:46px;top:80px;" width="16" height="16" viewBox="0 0 16 16"><rect x="1.600" y="1.600" width="12.800" height="12.800" fill="none" stroke="#fff" stroke-width="1.300" stroke-dasharray="2.600 1.670"/></svg><div class="a" style="left:63.7px;top:79px;width:18px;height:18px;background:#585858;border-radius:0;"></div><svg class="a" style="left:64.7px;top:80px;" width="16" height="16" viewBox="0 0 16 16"><path d="M5.500 1h9.500v9.500h-4.500v4.500H1V5.500h4.500z" fill="#d4d4d4"/></svg><div class="a" style="left:82.4px;top:79px;width:18px;height:18px;background:#585858;border-radius:0;"></div><svg class="a" style="left:83.4px;top:80px;" width="16" height="16" viewBox="0 0 16 16"><path d="M6 1h9v9h-4.500V5.500H6z" fill="#d4d4d4"/><rect x="1.600" y="6.100" width="8.300" height="8.300" fill="none" stroke="#d4d4d4" stroke-width="1.200" stroke-dasharray="2.300 1.700"/></svg><div class="a" style="left:101.1px;top:79px;width:18px;height:18px;background:#585858;border-radius:0;"></div><svg class="a" style="left:102.1px;top:80px;" width="16" height="16" viewBox="0 0 16 16"><path d="M5.500 1h9.500v9.500h-4.500V5.500H5.500zM1 5.500h4.500v5h5v4.500H1z" fill="#d4d4d4"/></svg><div class="a" style="left:119.8px;top:79px;width:18px;height:18px;background:#585858;border-radius:0 4px 4px 0;"></div><svg class="a" style="left:120.8px;top:80px;" width="16" height="16" viewBox="0 0 16 16"><rect x="1.600" y="1.600" width="12.800" height="12.800" fill="none" stroke="#d4d4d4" stroke-width="1.200" stroke-dasharray="2.600 1.670"/><rect x="5" y="5" width="6" height="6" fill="#d4d4d4"/></svg><svg class="a" style="left:1439.3px;top:79.8px;" width="16" height="16" viewBox="0 0 16 16"><path d="M8 1v14" stroke="#c8c8c8" stroke-width="1" stroke-dasharray="2 1.3" fill="none"/><path d="M5.8 3.5C3 1.5 1.2 3 2.2 5.5c.5 1.2 1.5 1.8 2 2.5-1.5.5-2.6 2-2 3.8.7 2 3 1.6 3.600-.3" fill="none" stroke="#c8c8c8" stroke-width="1"/><path d="M10.2 3.5C13 1.5 14.800 3 13.800 5.5c-.5 1.2-1.500 1.800-2 2.500 1.500.5 2.600 2 2 3.800-.7 2-3 1.600-3.600-.3" fill="none" stroke="#c8c8c8" stroke-width="1"/></svg><div class="a" style="left:1458.5px;top:79.5px;width:16.5px;height:17px;background:#555555;border-radius:4px;border:1px solid #3c3c3c;"></div><div class="t" style="top:79px;height:20px;line-height:20px;left:1317px;width:300px;text-align:center;">X</div><div class="a" style="left:1481px;top:79.5px;width:87px;height:17px;background:#2b2b2b;border-radius:4px;border:1px solid #3f3f3f;"></div><div class="t" style="top:79px;height:20px;line-height:20px;left:1488.6px;">Pose Options</div><svg class="a" style="left:1557.5px;top:84.5px;" width="10" height="8" viewBox="0 0 10 8"><path d="M2.2 2.2L5 5.0L7.8 2.2" fill="none" stroke="#d8d8d8" stroke-width="1.3" stroke-linecap="round" stroke-linejoin="round"/></svg><div class="t" style="left:10.400px;top:108px;line-height:18px;text-shadow:0 0 2px rgba(0,0,0,.55),1px 1px 1px rgba(0,0,0,.35);color:#fff">Camera Perspective<br>(<span class="n">1</span>) rig : foot_ik.L<br>Rendering Done</div><div class="a" style="left:0px;top:116px;width:5px;height:13px;background:rgba(70,70,70,.55);border-radius:0 4px 4px 0;"></div><svg class="a" style="left:-1.5px;top:117.5px;" width="8" height="10" viewBox="0 0 8 10"><path d="M2.9 2.8L5.1 5L2.9 7.2" fill="none" stroke="#bbb" stroke-width="1" stroke-linecap="round" stroke-linejoin="round"/></svg><div class="a" style="left:1364.3px;top:100px;width:183.7px;height:288.3px;background:#3f3f3f;border-radius:0px 0px 4px 4px;"></div><div class="t" style="top:96px;height:20px;line-height:20px;left:1373.5px;">Location:</div><div class="a" style="left:1372.8px;top:116px;width:126.2px;height:57.1px;background:#3a3a3a;border-radius:4px;"></div><div class="a" style="left:1372.8px;top:116px;width:126.2px;height:18px;background:#565656;border-radius:4px 4px 0 0;"></div><div class="t" style="top:116px;height:20px;line-height:20px;left:1241.8px;width:300px;text-align:center;">X</div><div class="t" style="top:116px;height:20px;line-height:20px;right:433.8px;"><span class="n">0.12285</span> m</div><svg class="a" style="left:1516.5px;top:116.5px;" width="16" height="16" viewBox="0 0 16 16"><path d="M0.900 6.400V5.700a3.150 3.150 0 0 1 6.300 0V7.700" fill="none" stroke="#b4b4b4" stroke-width="0.950"/><rect x="5.950" y="8.150" width="8.100" height="4.800" fill="none" stroke="#b4b4b4" stroke-width="0.950"/><rect x="9.500" y="9.700" width="1.200" height="1.700" fill="#b4b4b4"/></svg><div class="a" style="left:1372.8px;top:135.55px;width:126.2px;height:18px;background:#565656;border-radius:0;"></div><div class="t" style="top:135.55px;height:20px;line-height:20px;left:1241.8px;width:300px;text-align:center;">Y</div><div class="t" style="top:135.55px;height:20px;line-height:20px;right:433.8px;">-<span class="n">0.009383</span> m</div><svg class="a" style="left:1516.5px;top:136.05px;" width="16" height="16" viewBox="0 0 16 16"><path d="M0.900 6.400V5.700a3.150 3.150 0 0 1 6.300 0V7.700" fill="none" stroke="#b4b4b4" stroke-width="0.950"/><rect x="5.950" y="8.150" width="8.100" height="4.800" fill="none" stroke="#b4b4b4" stroke-width="0.950"/><rect x="9.500" y="9.700" width="1.200" height="1.700" fill="#b4b4b4"/></svg><div class="a" style="left:1372.8px;top:155.1px;width:126.2px;height:18px;background:#565656;border-radius:0 0 4px 4px;"></div><div class="t" style="top:155.1px;height:20px;line-height:20px;left:1241.8px;width:300px;text-align:center;">Z</div><div class="t" style="top:155.1px;height:20px;line-height:20px;right:433.8px;"><span class="n">1.3418</span> m</div><svg class="a" style="left:1516.5px;top:155.6px;" width="16" height="16" viewBox="0 0 16 16"><path d="M0.900 6.400V5.700a3.150 3.150 0 0 1 6.300 0V7.700" fill="none" stroke="#b4b4b4" stroke-width="0.950"/><rect x="5.950" y="8.150" width="8.100" height="4.800" fill="none" stroke="#b4b4b4" stroke-width="0.950"/><rect x="9.500" y="9.700" width="1.200" height="1.700" fill="#b4b4b4"/></svg><div class="t" style="top:177.8px;height:20px;line-height:20px;left:1373.5px;">Rotation:</div><div class="t" style="top:177.8px;height:20px;line-height:20px;left:1517px;color:#ffffff;"><span class="n">4</span>L</div><div class="a" style="left:1372.8px;top:198.3px;width:126.2px;height:76.65px;background:#3a3a3a;border-radius:4px;"></div><div class="a" style="left:1372.8px;top:198.3px;width:126.2px;height:18px;background:#565656;border-radius:4px 4px 0 0;"></div><div class="t" style="top:198.3px;height:20px;line-height:20px;left:1241.8px;width:300px;text-align:center;">W</div><div class="t" style="top:198.3px;height:20px;line-height:20px;right:433.8px;"><span class="n">0.773</span></div><svg class="a" style="left:1516.5px;top:198.8px;" width="16" height="16" viewBox="0 0 16 16"><path d="M0.900 6.400V5.700a3.150 3.150 0 0 1 6.300 0V7.700" fill="none" stroke="#b4b4b4" stroke-width="0.950"/><rect x="5.950" y="8.150" width="8.100" height="4.800" fill="none" stroke="#b4b4b4" stroke-width="0.950"/><rect x="9.500" y="9.700" width="1.200" height="1.700" fill="#b4b4b4"/></svg><div class="a" style="left:1372.8px;top:217.85px;width:126.2px;height:18px;background:#565656;border-radius:0;"></div><div class="t" style="top:217.85px;height:20px;line-height:20px;left:1241.8px;width:300px;text-align:center;">X</div><div class="t" style="top:217.85px;height:20px;line-height:20px;right:433.8px;"><span class="n">0.606</span></div><svg class="a" style="left:1516.5px;top:218.35px;" width="16" height="16" viewBox="0 0 16 16"><path d="M0.900 6.400V5.700a3.150 3.150 0 0 1 6.300 0V7.700" fill="none" stroke="#b4b4b4" stroke-width="0.950"/><rect x="5.950" y="8.150" width="8.100" height="4.800" fill="none" stroke="#b4b4b4" stroke-width="0.950"/><rect x="9.500" y="9.700" width="1.200" height="1.700" fill="#b4b4b4"/></svg><div class="a" style="left:1372.8px;top:237.4px;width:126.2px;height:18px;background:#565656;border-radius:0;"></div><div class="t" style="top:237.4px;height:20px;line-height:20px;left:1241.8px;width:300px;text-align:center;">Y</div><div class="t" style="top:237.4px;height:20px;line-height:20px;right:433.8px;"><span class="n">0.105</span></div><svg class="a" style="left:1516.5px;top:237.9px;" width="16" height="16" viewBox="0 0 16 16"><path d="M0.900 6.400V5.700a3.150 3.150 0 0 1 6.300 0V7.700" fill="none" stroke="#b4b4b4" stroke-width="0.950"/><rect x="5.950" y="8.150" width="8.100" height="4.800" fill="none" stroke="#b4b4b4" stroke-width="0.950"/><rect x="9.500" y="9.700" width="1.200" height="1.700" fill="#b4b4b4"/></svg><div class="a" style="left:1372.8px;top:256.95px;width:126.2px;height:18px;background:#565656;border-radius:0 0 4px 4px;"></div><div class="t" style="top:256.95px;height:20px;line-height:20px;left:1241.8px;width:300px;text-align:center;">Z</div><div class="t" style="top:256.95px;height:20px;line-height:20px;right:433.8px;"><span class="n">0.154</span></div><svg class="a" style="left:1516.5px;top:257.45px;" width="16" height="16" viewBox="0 0 16 16"><path d="M0.900 6.400V5.700a3.150 3.150 0 0 1 6.300 0V7.700" fill="none" stroke="#b4b4b4" stroke-width="0.950"/><rect x="5.950" y="8.150" width="8.100" height="4.800" fill="none" stroke="#b4b4b4" stroke-width="0.950"/><rect x="9.500" y="9.700" width="1.200" height="1.700" fill="#b4b4b4"/></svg><div class="a" style="left:1373.4px;top:280.3px;width:165.4px;height:17.5px;background:#282828;border-radius:4px;border:1px solid #383838;"></div><div class="t" style="top:280px;height:20px;line-height:20px;left:1380.3px;">Quaternion (WXYZ)</div><svg class="a" style="left:1527.8px;top:285.8px;" width="10" height="8" viewBox="0 0 10 8"><path d="M2.2 2.2L5 5.0L7.8 2.2" fill="none" stroke="#d8d8d8" stroke-width="1.3" stroke-linecap="round" stroke-linejoin="round"/></svg><div class="t" style="top:301.5px;height:20px;line-height:20px;left:1373.5px;">Scale:</div><div class="a" style="left:1372.8px;top:322px;width:126.2px;height:57.1px;background:#3a3a3a;border-radius:4px;"></div><div class="a" style="left:1372.8px;top:322px;width:126.2px;height:18px;background:#565656;border-radius:4px 4px 0 0;"></div><div class="t" style="top:322px;height:20px;line-height:20px;left:1241.8px;width:300px;text-align:center;">X</div><div class="t" style="top:322px;height:20px;line-height:20px;right:433.8px;"><span class="n">1.000</span></div><svg class="a" style="left:1516.5px;top:322.5px;" width="16" height="16" viewBox="0 0 16 16"><path d="M0.900 6.400V5.700a3.150 3.150 0 0 1 6.300 0V7.700" fill="none" stroke="#b4b4b4" stroke-width="0.950"/><rect x="5.950" y="8.150" width="8.100" height="4.800" fill="none" stroke="#b4b4b4" stroke-width="0.950"/><rect x="9.500" y="9.700" width="1.200" height="1.700" fill="#b4b4b4"/></svg><div class="a" style="left:1372.8px;top:341.55px;width:126.2px;height:18px;background:#565656;border-radius:0;"></div><div class="t" style="top:341.55px;height:20px;line-height:20px;left:1241.8px;width:300px;text-align:center;">Y</div><div class="t" style="top:341.55px;height:20px;line-height:20px;right:433.8px;"><span class="n">1.000</span></div><svg class="a" style="left:1516.5px;top:342.05px;" width="16" height="16" viewBox="0 0 16 16"><path d="M0.900 6.400V5.700a3.150 3.150 0 0 1 6.300 0V7.700" fill="none" stroke="#b4b4b4" stroke-width="0.950"/><rect x="5.950" y="8.150" width="8.100" height="4.800" fill="none" stroke="#b4b4b4" stroke-width="0.950"/><rect x="9.500" y="9.700" width="1.200" height="1.700" fill="#b4b4b4"/></svg><div class="a" style="left:1372.8px;top:361.1px;width:126.2px;height:18px;background:#565656;border-radius:0 0 4px 4px;"></div><div class="t" style="top:361.1px;height:20px;line-height:20px;left:1241.8px;width:300px;text-align:center;">Z</div><div class="t" style="top:361.1px;height:20px;line-height:20px;right:433.8px;"><span class="n">1.000</span></div><svg class="a" style="left:1516.5px;top:361.6px;" width="16" height="16" viewBox="0 0 16 16"><path d="M0.900 6.400V5.700a3.150 3.150 0 0 1 6.300 0V7.700" fill="none" stroke="#b4b4b4" stroke-width="0.950"/><rect x="5.950" y="8.150" width="8.100" height="4.800" fill="none" stroke="#b4b4b4" stroke-width="0.950"/><rect x="9.500" y="9.700" width="1.200" height="1.700" fill="#b4b4b4"/></svg><div class="a" style="left:1364.3px;top:391.4px;width:183.7px;height:249.3px;background:#3f3f3f;border-radius:4px 4px 4px 4px;"></div><svg class="a" style="left:1371.3px;top:400px;" width="10" height="8" viewBox="0 0 10 8"><path d="M1.4 1.7999999999999998L5 5.3999999999999995L8.6 1.7999999999999998" fill="none" stroke="#c8c8c8" stroke-width="1.1" stroke-linecap="round" stroke-linejoin="round"/></svg><div class="t" style="top:394.8px;height:20px;line-height:20px;left:1386.6px;">Rig Main Properties</div><svg class="a" style="left:1530px;top:401px;" width="11" height="6" viewBox="0 0 11 6"><rect x="0" y="0.0" width="1.4" height="1.4" fill="#2a2a2a"/><rect x="0" y="3.5" width="1.4" height="1.4" fill="#2a2a2a"/><rect x="3" y="0.0" width="1.4" height="1.4" fill="#2a2a2a"/><rect x="3" y="3.5" width="1.4" height="1.4" fill="#2a2a2a"/><rect x="6" y="0.0" width="1.4" height="1.4" fill="#2a2a2a"/><rect x="6" y="3.5" width="1.4" height="1.4" fill="#2a2a2a"/><rect x="9" y="0.0" width="1.4" height="1.4" fill="#2a2a2a"/><rect x="9" y="3.5" width="1.4" height="1.4" fill="#2a2a2a"/></svg><div class="a" style="left:1373.4px;top:425.3px;width:165.4px;height:17.5px;background:#565656;border-radius:4px;"></div><div class="t" style="top:425px;height:20px;line-height:20px;left:1388px;">IK-FK (foot.L)</div><div class="t" style="top:425px;height:20px;line-height:20px;right:394.5px;"><span class="n">0.000</span></div><div class="a" style="left:1373.4px;top:450.4px;width:165.4px;height:17.6px;background:#565656;border-radius:4px 4px 0 0;"></div><svg class="a" style="left:1376.2px;top:451.2px;" width="16" height="16" viewBox="0 0 16 16"><g transform="rotate(45 9.700 6.300)"><path d="M5.900 11.400V6.300a3.800 3.800 0 0 1 7.600 0V11.400" fill="none" stroke="#f0f0f0" stroke-width="4"/><path d="M3.700 9.300h4.400M11.300 9.300h4.400" stroke="#565656" stroke-width="1.100"/></g><path d="M1.100 15v-2.600h3.100v-2.700" fill="none" stroke="#f0f0f0" stroke-width="1"/></svg><div class="t" style="top:450.2px;height:20px;line-height:20px;left:1315px;width:300px;text-align:center;">FK-&gt;IK (foot.L)</div><div class="a" style="left:1373.4px;top:469.4px;width:81.3px;height:18.3px;background:#4a4a4a;border-radius:0 0 0 4px;"></div><div class="a" style="left:1455.7px;top:469.4px;width:83.1px;height:18.3px;background:#4a4a4a;border-radius:0 0 4px 0;"></div><svg class="a" style="left:1376px;top:470.4px;" width="16" height="16" viewBox="0 0 16 16"><path d="M7 7l7 3.500-3 .8-1.200 3z" fill="#626262"/><path d="M3 2v3M1.500 3.500h3M8.500 1v2.400M7.300 2.200h2.400M2.500 8v2.400M1.300 9.200h2.400M12.500 3v2M11.500 4h2" stroke="#626262" stroke-width="1" fill="none"/></svg><div class="t" style="top:469.6px;height:20px;line-height:20px;left:1407px;color:#8e8e8e;">Action</div><svg class="a" style="left:1459px;top:470.4px;" width="16" height="16" viewBox="0 0 16 16"><circle cx="8" cy="8" r="6.600" fill="#767676"/><line x1="5.300" y1="5.300" x2="10.700" y2="10.700" stroke="#484848" stroke-width="1.800" stroke-linecap="round"/><line x1="10.700" y1="5.300" x2="5.300" y2="10.700" stroke="#484848" stroke-width="1.800" stroke-linecap="round"/></svg><div class="t" style="top:469.6px;height:20px;line-height:20px;left:1493px;color:#8e8e8e;">Clear</div><div class="a" style="left:1373.4px;top:495.3px;width:165.4px;height:17.6px;background:#565656;border-radius:4px 4px 0 0;"></div><svg class="a" style="left:1376.2px;top:496.1px;" width="16" height="16" viewBox="0 0 16 16"><g transform="rotate(45 9.700 6.300)"><path d="M5.900 11.400V6.300a3.800 3.800 0 0 1 7.600 0V11.400" fill="none" stroke="#f0f0f0" stroke-width="4"/><path d="M3.700 9.300h4.400M11.300 9.300h4.400" stroke="#565656" stroke-width="1.100"/></g><path d="M1.100 15v-2.600h3.100v-2.700" fill="none" stroke="#f0f0f0" stroke-width="1"/></svg><div class="t" style="top:495.1px;height:20px;line-height:20px;left:1315px;width:300px;text-align:center;">IK-&gt;FK (foot.L)</div><div class="a" style="left:1373.4px;top:514.3px;width:81.3px;height:18.3px;background:#4a4a4a;border-radius:0 0 0 4px;"></div><div class="a" style="left:1455.7px;top:514.3px;width:83.1px;height:18.3px;background:#4a4a4a;border-radius:0 0 4px 0;"></div><svg class="a" style="left:1376px;top:515.3px;" width="16" height="16" viewBox="0 0 16 16"><path d="M7 7l7 3.500-3 .8-1.200 3z" fill="#626262"/><path d="M3 2v3M1.500 3.500h3M8.500 1v2.400M7.300 2.200h2.400M2.500 8v2.400M1.300 9.200h2.400M12.500 3v2M11.500 4h2" stroke="#626262" stroke-width="1" fill="none"/></svg><div class="t" style="top:514.5px;height:20px;line-height:20px;left:1407px;color:#8e8e8e;">Action</div><svg class="a" style="left:1459px;top:515.3px;" width="16" height="16" viewBox="0 0 16 16"><circle cx="8" cy="8" r="6.600" fill="#767676"/><line x1="5.300" y1="5.300" x2="10.700" y2="10.700" stroke="#484848" stroke-width="1.800" stroke-linecap="round"/><line x1="10.700" y1="5.300" x2="5.300" y2="10.700" stroke="#484848" stroke-width="1.800" stroke-linecap="round"/></svg><div class="t" style="top:514.5px;height:20px;line-height:20px;left:1493px;color:#8e8e8e;">Clear</div><div class="a" style="left:1373.4px;top:540.3px;width:165.4px;height:17.5px;background:#565656;border-radius:4px;"></div><div class="t" style="top:540px;height:20px;line-height:20px;left:1388px;">IK Stretch</div><div class="t" style="top:540px;height:20px;line-height:20px;right:394.5px;"><span class="n">0.000</span></div><div class="a" style="left:1373.4px;top:565.4px;width:106.8px;height:17.8px;background:#565656;border-radius:4px 0 0 4px;"></div><svg class="a" style="left:1376px;top:566.3px;" width="16" height="16" viewBox="0 0 16 16"><path d="M8 1v3.500M8 12v3" stroke="#e6e6e6" stroke-width="1.100"/><path d="M13.500 5.500C16 9 12 11.500 8 11.500S0 9 2.500 5.800C4 4.500 6 4.300 6.500 4.300" fill="none" stroke="#e6e6e6" stroke-width="1.100"/><path d="M8 4.800l2.800 3-2.800 1.500M13 12.500c.8-.8 1.200-1.600 1.200-2.800" fill="none" stroke="#e6e6e6" stroke-width="1.100"/></svg><div class="t" style="top:565.3px;height:20px;line-height:20px;left:1285.5px;width:300px;text-align:center;">Toggle Pole</div><div class="a" style="left:1481px;top:565.4px;width:38px;height:17.8px;background:#565656;"></div><div class="t" style="top:565.3px;height:20px;line-height:20px;left:1349.5px;width:300px;text-align:center;"><span class="n">1</span></div><div class="a" style="left:1519.8px;top:565.4px;width:19px;height:17.8px;background:#4c4c4c;border-radius:0 4px 4px 0;"></div><svg class="a" style="left:1521.5px;top:566.4px;" width="16" height="16" viewBox="0 0 16 16"><path d="M7 7l7 3.500-3 .8-1.200 3z" fill="#666666"/><path d="M3 2v3M1.500 3.500h3M8.500 1v2.400M7.300 2.200h2.400M2.500 8v2.400M1.300 9.200h2.400M12.500 3v2M11.500 4h2" stroke="#666666" stroke-width="1" fill="none"/></svg><div class="a" style="left:1373.4px;top:590.5px;width:106.8px;height:17.8px;background:#565656;border-radius:4px 0 0 4px;"></div><svg class="a" style="left:1378.5px;top:595.8px;" width="10" height="8" viewBox="0 0 10 8"><path d="M1.4 1.7999999999999998L5 5.3999999999999995L8.6 1.7999999999999998" fill="none" stroke="#d8d8d8" stroke-width="1.2" stroke-linecap="round" stroke-linejoin="round"/></svg><div class="t" style="top:590.4px;height:20px;line-height:20px;left:1285.5px;width:300px;text-align:center;">IK Parent</div><div class="a" style="left:1481px;top:590.5px;width:38px;height:17.8px;background:#565656;"></div><div class="t" style="top:590.4px;height:20px;line-height:20px;left:1349.5px;width:300px;text-align:center;"><span class="n">1</span></div><div class="a" style="left:1519.8px;top:590.5px;width:19px;height:17.8px;background:#4c4c4c;border-radius:0 4px 4px 0;"></div><svg class="a" style="left:1521.5px;top:591.5px;" width="16" height="16" viewBox="0 0 16 16"><path d="M7 7l7 3.500-3 .8-1.200 3z" fill="#666666"/><path d="M3 2v3M1.500 3.500h3M8.500 1v2.400M7.300 2.200h2.400M2.500 8v2.400M1.300 9.200h2.400M12.500 3v2M11.500 4h2" stroke="#666666" stroke-width="1" fill="none"/></svg><div class="a" style="left:1373.4px;top:615.3px;width:106.8px;height:17.8px;background:#565656;border-radius:4px 0 0 4px;"></div><svg class="a" style="left:1378.5px;top:620.6px;" width="10" height="8" viewBox="0 0 10 8"><path d="M1.4 1.7999999999999998L5 5.3999999999999995L8.6 1.7999999999999998" fill="none" stroke="#d8d8d8" stroke-width="1.2" stroke-linecap="round" stroke-linejoin="round"/></svg><div class="t" style="top:615.2px;height:20px;line-height:20px;left:1285.5px;width:300px;text-align:center;">Pole Parent</div><div class="a" style="left:1481px;top:615.3px;width:38px;height:17.8px;background:#565656;"></div><div class="t" style="top:615.2px;height:20px;line-height:20px;left:1349.5px;width:300px;text-align:center;"><span class="n">3</span></div><div class="a" style="left:1519.8px;top:615.3px;width:19px;height:17.8px;background:#4c4c4c;border-radius:0 4px 4px 0;"></div><svg class="a" style="left:1521.5px;top:616.3px;" width="16" height="16" viewBox="0 0 16 16"><path d="M7 7l7 3.500-3 .8-1.200 3z" fill="#666666"/><path d="M3 2v3M1.500 3.500h3M8.500 1v2.400M7.300 2.200h2.400M2.500 8v2.400M1.300 9.200h2.400M12.500 3v2M11.500 4h2" stroke="#666666" stroke-width="1" fill="none"/></svg><div class="a" style="left:1364.3px;top:644.8px;width:183.7px;height:285.2px;background:#3f3f3f;border-radius:4px 4px 0px 0px;"></div><svg class="a" style="left:1371.3px;top:653px;" width="10" height="8" viewBox="0 0 10 8"><path d="M1.4 1.7999999999999998L5 5.3999999999999995L8.6 1.7999999999999998" fill="none" stroke="#c8c8c8" stroke-width="1.1" stroke-linecap="round" stroke-linejoin="round"/></svg><div class="t" style="top:647.8px;height:20px;line-height:20px;left:1386.6px;">Rig Layers</div><svg class="a" style="left:1530px;top:654px;" width="11" height="6" viewBox="0 0 11 6"><rect x="0" y="0.0" width="1.4" height="1.4" fill="#2a2a2a"/><rect x="0" y="3.5" width="1.4" height="1.4" fill="#2a2a2a"/><rect x="3" y="0.0" width="1.4" height="1.4" fill="#2a2a2a"/><rect x="3" y="3.5" width="1.4" height="1.4" fill="#2a2a2a"/><rect x="6" y="0.0" width="1.4" height="1.4" fill="#2a2a2a"/><rect x="6" y="3.5" width="1.4" height="1.4" fill="#2a2a2a"/><rect x="9" y="0.0" width="1.4" height="1.4" fill="#2a2a2a"/><rect x="9" y="3.5" width="1.4" height="1.4" fill="#2a2a2a"/></svg><div class="a" style="left:1373.4px;top:678.4px;width:165.4px;height:17.5px;background:#4772b3;border-radius:4px;"></div><div class="t" style="top:678.2px;height:20px;line-height:20px;left:1306px;width:300px;text-align:center;color:#ffffff;">Torso</div><div class="a" style="left:1373.4px;top:700.4px;width:165.4px;height:17.5px;background:#4772b3;border-radius:4px;"></div><div class="t" style="top:700.2px;height:20px;line-height:20px;left:1306px;width:300px;text-align:center;color:#ffffff;">Torso (Tweak)</div><div class="a" style="left:1373.4px;top:722.5px;width:165.4px;height:17.5px;background:#4772b3;border-radius:4px;"></div><div class="t" style="top:722.3px;height:20px;line-height:20px;left:1306px;width:300px;text-align:center;color:#ffffff;">Fingers</div><div class="a" style="left:1373.4px;top:744.5px;width:165.4px;height:17.5px;background:#4772b3;border-radius:4px;"></div><div class="t" style="top:744.3px;height:20px;line-height:20px;left:1306px;width:300px;text-align:center;color:#ffffff;">Fingers (Detail)</div><div class="a" style="left:1373.4px;top:766.6px;width:77.6px;height:17.5px;background:#4772b3;border-radius:4px;"></div><div class="t" style="top:766.4px;height:20px;line-height:20px;left:1262.2px;width:300px;text-align:center;color:#ffffff;">Arm.L (IK)</div><div class="a" style="left:1460.7px;top:766.6px;width:78.1px;height:17.5px;background:#4772b3;border-radius:4px;"></div><div class="t" style="top:766.4px;height:20px;line-height:20px;left:1349.7px;width:300px;text-align:center;color:#ffffff;">Arm.R (IK)</div><div class="a" style="left:1373.4px;top:788.5px;width:77.6px;height:17.5px;background:#565656;border-radius:4px;"></div><div class="t" style="top:788.3px;height:20px;line-height:20px;left:1262.2px;width:300px;text-align:center;color:#e6e6e6;">Arm.L (FK)</div><div class="a" style="left:1460.7px;top:788.5px;width:78.1px;height:17.5px;background:#565656;border-radius:4px;"></div><div class="t" style="top:788.3px;height:20px;line-height:20px;left:1349.7px;width:300px;text-align:center;color:#e6e6e6;">Arm.R (FK)</div><div class="a" style="left:1373.4px;top:810.3px;width:77.6px;height:17.5px;background:#4772b3;border-radius:4px;"></div><div class="t" style="top:810.1px;height:20px;line-height:20px;left:1262.2px;width:300px;text-align:center;color:#ffffff;">Arm.L (Tweak)</div><div class="a" style="left:1460.7px;top:810.3px;width:78.1px;height:17.5px;background:#4772b3;border-radius:4px;"></div><div class="t" style="top:810.1px;height:20px;line-height:20px;left:1349.7px;width:300px;text-align:center;color:#ffffff;">Arm.R (Tweak)</div><div class="a" style="left:1373.4px;top:832.4px;width:77.6px;height:17.5px;background:#4772b3;border-radius:4px;"></div><div class="t" style="top:832.2px;height:20px;line-height:20px;left:1262.2px;width:300px;text-align:center;color:#ffffff;">Leg.L (IK)</div><div class="a" style="left:1460.7px;top:832.4px;width:78.1px;height:17.5px;background:#4772b3;border-radius:4px;"></div><div class="t" style="top:832.2px;height:20px;line-height:20px;left:1349.7px;width:300px;text-align:center;color:#ffffff;">Leg.R (IK)</div><div class="a" style="left:1373.4px;top:854.5px;width:77.6px;height:17.5px;background:#565656;border-radius:4px;"></div><div class="t" style="top:854.3px;height:20px;line-height:20px;left:1262.2px;width:300px;text-align:center;color:#e6e6e6;">Leg.L (FK)</div><div class="a" style="left:1460.7px;top:854.5px;width:78.1px;height:17.5px;background:#565656;border-radius:4px;"></div><div class="t" style="top:854.3px;height:20px;line-height:20px;left:1349.7px;width:300px;text-align:center;color:#e6e6e6;">Leg.R (FK)</div><div class="a" style="left:1373.4px;top:876.4px;width:77.6px;height:17.5px;background:#4772b3;border-radius:4px;"></div><div class="t" style="top:876.2px;height:20px;line-height:20px;left:1262.2px;width:300px;text-align:center;color:#ffffff;">Leg.L (Tweak)</div><div class="a" style="left:1460.7px;top:876.4px;width:78.1px;height:17.5px;background:#4772b3;border-radius:4px;"></div><div class="t" style="top:876.2px;height:20px;line-height:20px;left:1349.7px;width:300px;text-align:center;color:#ffffff;">Leg.R (Tweak)</div><div class="a" style="left:1373.4px;top:914.3px;width:165.4px;height:17.5px;background:#565656;border-radius:4px;"></div><div class="t" style="top:914.3px;height:20px;line-height:20px;left:1306px;width:300px;text-align:center;">Root</div><div class="a" style="left:1555px;top:100px;width:21px;height:823px;background:#1a1a1a;"></div><div class="a" style="left:1555px;top:100px;width:20.5px;height:1px;background:#8e8e88;"></div><div class="a" style="left:1555px;top:105.7px;width:16.7px;height:38.5px;background:#3a3a3a;border-radius:0 4px 4px 0;"></div><div class="t" style="left:1504.2px;top:113.44999999999999px;width:120px;height:20px;line-height:20px;text-align:center;transform:rotate(-90deg);color:#ffffff">Item</div><div class="a" style="left:1555px;top:148.5px;width:16.7px;height:36.3px;background:#2a2a2a;border-radius:0 4px 4px 0;border:1px solid #333;border-left:none;"></div><div class="t" style="left:1504.2px;top:155.15px;width:120px;height:20px;line-height:20px;text-align:center;transform:rotate(-90deg);color:#c8c8c8">Tool</div><div class="a" style="left:1555px;top:189px;width:16.7px;height:40.7px;background:#2a2a2a;border-radius:0 4px 4px 0;border:1px solid #333;border-left:none;"></div><div class="t" style="left:1504.2px;top:197.85px;width:120px;height:20px;line-height:20px;text-align:center;transform:rotate(-90deg);color:#c8c8c8">View</div><div class="a" style="left:1555px;top:234px;width:16.7px;height:66px;background:#2a2a2a;border-radius:0 4px 4px 0;border:1px solid #333;border-left:none;"></div><div class="t" style="left:1504.2px;top:255.5px;width:120px;height:20px;line-height:20px;text-align:center;transform:rotate(-90deg);color:#c8c8c8">Animation</div></div></div><div class="a" style="left:1578.2px;top:48.5px;width:340.29999999999995px;height:313.3px;border-radius:5px;overflow:hidden;background:#282828"><div class="a" style="left:-1578.2px;top:-48.5px;width:1920px;height:1052px"><div class="a" style="left:1578.2px;top:95.5px;width:340px;height:20px;background:#2b2b2b;"></div><div class="a" style="left:1578.2px;top:135.5px;width:340px;height:20px;background:#2b2b2b;"></div><div class="a" style="left:1578.2px;top:175.5px;width:340px;height:20px;background:#2b2b2b;"></div><div class="a" style="left:1578.2px;top:215.5px;width:340px;height:20px;background:#2b2b2b;"></div><div class="a" style="left:1578.2px;top:255.5px;width:340px;height:20px;background:#2b2b2b;"></div><div class="a" style="left:1578.2px;top:295.5px;width:340px;height:20px;background:#2b2b2b;"></div><div class="a" style="left:1578.2px;top:335.5px;width:340px;height:20px;background:#2b2b2b;"></div><div class="a" style="left:1586px;top:51.5px;width:31.8px;height:18.5px;background:#2b2b2b;border-radius:4px;border:1px solid #3f3f3f;"></div><svg class="a" style="left:1589px;top:53px;" width="16" height="16" viewBox="0 0 16 16"><rect x="1" y="1.500" width="5" height="2.600" fill="#e6e6e6"/><rect x="7" y="6.700" width="7" height="2.600" fill="#e6e6e6"/><rect x="7" y="11.700" width="7" height="2.600" fill="#e6e6e6"/><path d="M3 4v9h3M3 8h3" fill="none" stroke="#e6e6e6" stroke-width="1"/></svg><svg class="a" style="left:1606px;top:57.6px;" width="10" height="8" viewBox="0 0 10 8"><path d="M2.2 2.2L5 5.0L7.8 2.2" fill="none" stroke="#d8d8d8" stroke-width="1.3" stroke-linecap="round" stroke-linejoin="round"/></svg><div class="a" style="left:1623.8px;top:51.5px;width:31px;height:18.5px;background:#2b2b2b;border-radius:4px;border:1px solid #3f3f3f;"></div><svg class="a" style="left:1627px;top:53px;" width="16" height="16" viewBox="0 0 16 16"><path d="M1.500 5v9.500H11M3.500 3.500v9H13" fill="none" stroke="#e6e6e6" stroke-width="1"/><rect x="5.500" y="1.500" width="9.500" height="9" fill="#e6e6e6"/><path d="M6.500 9l2.500-3.500 2 2.500 1-1 2 2z" fill="#282828"/><circle cx="12.500" cy="4" r="1" fill="#282828"/></svg><svg class="a" style="left:1643.3px;top:57.6px;" width="10" height="8" viewBox="0 0 10 8"><path d="M2.2 2.2L5 5.0L7.8 2.2" fill="none" stroke="#d8d8d8" stroke-width="1.3" stroke-linecap="round" stroke-linejoin="round"/></svg><div class="a" style="left:1682.6px;top:51.5px;width:110px;height:18.5px;background:#1d1d1d;border-radius:4px;border:1px solid #3a3a3a;"></div><svg class="a" style="left:1685px;top:53px;" width="16" height="16" viewBox="0 0 16 16"><circle cx="9.800" cy="6" r="4.200" fill="none" stroke="#e6e6e6" stroke-width="1.300"/><path d="M6.800 9.200L2 14" stroke="#e6e6e6" stroke-width="1.400" stroke-linecap="round"/></svg><div class="a" style="left:1855.8px;top:51.5px;width:31.5px;height:18.5px;background:#2b2b2b;border-radius:4px;border:1px solid #3f3f3f;"></div><svg class="a" style="left:1859px;top:53px;" width="16" height="16" viewBox="0 0 16 16"><path d="M1.500 2.500h13L9.500 8.500v5.500l-3-1.500V8.500z" fill="none" stroke="#e6e6e6" stroke-width="1.300" stroke-linejoin="round"/></svg><svg class="a" style="left:1875.5px;top:57.6px;" width="10" height="8" viewBox="0 0 10 8"><path d="M2.2 2.2L5 5.0L7.8 2.2" fill="none" stroke="#d8d8d8" stroke-width="1.3" stroke-linecap="round" stroke-linejoin="round"/></svg><div class="a" style="left:1892.3px;top:51.5px;width:19px;height:18.5px;background:#555555;border-radius:4px;"></div><svg class="a" style="left:1893.8px;top:53px;" width="16" height="16" viewBox="0 0 16 16"><path d="M1.500 3h6M1.500 3v2.500h6M2.500 5.500v8.500h9V9" fill="none" stroke="#e6e6e6" stroke-width="1.100"/><rect x="5" y="8" width="3.500" height="1.300" fill="#e6e6e6"/><circle cx="11.800" cy="4.200" r="3.600" fill="#e6e6e6"/><path d="M11.800 2.200v4M9.800 4.200h4" stroke="#545454" stroke-width="1.200"/></svg><div class="a" style="left:1578.2px;top:215.4px;width:340px;height:20px;background:#30508a;"></div><div class="a" style="left:1607.3px;top:116px;width:1px;height:114px;background:#4a4a4a;"></div><svg class="a" style="left:1600px;top:77.1px;" width="16" height="16" viewBox="0 0 16 16"><rect x="1.500" y="2" width="13" height="3.200" fill="#e6e6e6"/><path d="M2.500 6.200h11v8h-11z" fill="#e6e6e6"/><rect x="6" y="8" width="4" height="1.800" fill="#282828"/></svg><div class="t" style="top:76.8px;height:20px;line-height:20px;left:1622.4px;">Scene Collection</div><svg class="a" style="left:1604.3px;top:102.08px;" width="7" height="6" viewBox="0 0 7 6"><path d="M0 0H7L3.500 6z" fill="#e0e0e0"/></svg><svg class="a" style="left:1619.8px;top:97.08px;" width="16" height="16" viewBox="0 0 16 16"><rect x="1.500" y="2" width="13" height="3.200" fill="#e6e6e6"/><path d="M2.500 6.200h11v8h-11z" fill="#e6e6e6"/><rect x="6" y="8" width="4" height="1.800" fill="#282828"/></svg><div class="t" style="top:96.78px;height:20px;line-height:20px;left:1642.3px;">Collection</div><svg class="a" style="left:1639.8px;top:117.06px;" width="16" height="16" viewBox="0 0 16 16"><rect x="1.500" y="2" width="13" height="3.200" fill="#8a8a8a"/><path d="M2.500 6.200h11v8h-11z" fill="#8a8a8a"/><rect x="6" y="8" width="4" height="1.800" fill="#282828"/></svg><div class="t" style="top:116.76px;height:20px;line-height:20px;left:1662.3px;color:#8c8c8c;">WGTS_rig</div><svg class="a" style="left:1625px;top:141.54px;" width="6" height="7" viewBox="0 0 6 7"><path d="M0 0L6 3.500 0 7z" fill="#c8c8c8"/></svg><svg class="a" style="left:1640px;top:137.04px;" width="16" height="16" viewBox="0 0 16 16"><circle cx="4.300" cy="4.300" r="3" fill="#e8954d"/><circle cx="10.300" cy="3.800" r="3.500" fill="#e8954d"/><rect x="2.500" y="7.500" width="9.500" height="6.500" rx="1" fill="#e8954d"/><path d="M12 10l3.500-2v6L12 12z" fill="#e8954d"/><circle cx="4.300" cy="4.300" r="1" fill="#282828"/><circle cx="10.300" cy="3.800" r="1.200" fill="#282828"/></svg><div class="t" style="top:136.74px;height:20px;line-height:20px;left:1662.3px;color:#ffffff;">Camera</div><div class="a" style="left:1721px;top:135.8px;width:19.8px;height:19.2px;background:#2d6e5e;border-radius:4px;border:1px solid #3f8a78;"></div><svg class="a" style="left:1723px;top:137.04px;" width="16" height="16" viewBox="0 0 16 16"><circle cx="4.300" cy="4.500" r="2.500" fill="none" stroke="#3ed0a6" stroke-width="1.100"/><circle cx="10" cy="4" r="3" fill="none" stroke="#3ed0a6" stroke-width="1.100"/><rect x="2.500" y="8" width="9.500" height="6" fill="none" stroke="#3ed0a6" stroke-width="1.100"/><path d="M12 10.500l3-1.500v5l-3-1.500" fill="none" stroke="#3ed0a6" stroke-width="1.100"/><rect x="5" y="10" width="4.500" height="2" fill="none" stroke="#3ed0a6" stroke-width="0.900"/></svg><svg class="a" style="left:1625px;top:161.52px;" width="6" height="7" viewBox="0 0 6 7"><path d="M0 0L6 3.500 0 7z" fill="#7a7a7a"/></svg><svg class="a" style="left:1640px;top:157.02px;" width="16" height="16" viewBox="0 0 16 16"><path d="M8 1a5.200 5.200 0 0 0-3 9.500V12h6v-1.500A5.200 5.200 0 0 0 8 1z" fill="#8a5f3c"/><rect x="5.500" y="12.800" width="5" height="1.200" fill="#8a5f3c"/><rect x="6.300" y="14.600" width="3.400" height="1" fill="#8a5f3c"/><path d="M6 6.500h4M6.500 5.500v3M9.500 5.500v3" stroke="#282828" stroke-width="0.900"/></svg><div class="t" style="top:156.72px;height:20px;line-height:20px;left:1662.3px;color:#8c8c8c;">Light</div><svg class="a" style="left:1709.5px;top:157.02px;" width="16" height="16" viewBox="0 0 16 16"><circle cx="8" cy="8" r="3" fill="none" stroke="#22705c" stroke-width="1.200"/><path d="M12.50 8.00L15.30 8.00" stroke="#22705c" stroke-width="1.200"/><path d="M11.18 11.18L13.16 13.16" stroke="#22705c" stroke-width="1.200"/><path d="M8.00 12.50L8.00 15.30" stroke="#22705c" stroke-width="1.200"/><path d="M4.82 11.18L2.84 13.16" stroke="#22705c" stroke-width="1.200"/><path d="M3.50 8.00L0.70 8.00" stroke="#22705c" stroke-width="1.200"/><path d="M4.82 4.82L2.84 2.84" stroke="#22705c" stroke-width="1.200"/><path d="M8.00 3.50L8.00 0.70" stroke="#22705c" stroke-width="1.200"/><path d="M11.18 4.82L13.16 2.84" stroke="#22705c" stroke-width="1.200"/></svg><svg class="a" style="left:1625px;top:181.5px;" width="6" height="7" viewBox="0 0 6 7"><path d="M0 0L6 3.500 0 7z" fill="#c8c8c8"/></svg><svg class="a" style="left:1640px;top:177px;" width="16" height="16" viewBox="0 0 16 16"><path d="M8 1a5.200 5.200 0 0 0-3 9.500V12h6v-1.500A5.200 5.200 0 0 0 8 1z" fill="#e8954d"/><rect x="5.500" y="12.800" width="5" height="1.200" fill="#e8954d"/><rect x="6.300" y="14.600" width="3.400" height="1" fill="#e8954d"/><path d="M6 6.500h4M6.500 5.500v3M9.500 5.500v3" stroke="#282828" stroke-width="0.900"/></svg><div class="t" style="top:176.7px;height:20px;line-height:20px;left:1662.3px;color:#ffffff;">Light.<span class="n">001</span></div><svg class="a" style="left:1733px;top:177px;" width="16" height="16" viewBox="0 0 16 16"><circle cx="8" cy="8" r="3" fill="none" stroke="#2fb08a" stroke-width="1.200"/><path d="M12.50 8.00L15.30 8.00" stroke="#2fb08a" stroke-width="1.200"/><path d="M11.18 11.18L13.16 13.16" stroke="#2fb08a" stroke-width="1.200"/><path d="M8.00 12.50L8.00 15.30" stroke="#2fb08a" stroke-width="1.200"/><path d="M4.82 11.18L2.84 13.16" stroke="#2fb08a" stroke-width="1.200"/><path d="M3.50 8.00L0.70 8.00" stroke="#2fb08a" stroke-width="1.200"/><path d="M4.82 4.82L2.84 2.84" stroke="#2fb08a" stroke-width="1.200"/><path d="M8.00 3.50L8.00 0.70" stroke="#2fb08a" stroke-width="1.200"/><path d="M11.18 4.82L13.16 2.84" stroke="#2fb08a" stroke-width="1.200"/></svg><div class="a" style="left:1586px;top:204px;width:4px;height:4px;background:#e0e0e0;border-radius:2px;"></div><svg class="a" style="left:1625px;top:201.48px;" width="6" height="7" viewBox="0 0 6 7"><path d="M0 0L6 3.500 0 7z" fill="#7a7a7a"/></svg><svg class="a" style="left:1640px;top:196.98px;" width="16" height="16" viewBox="0 0 16 16"><circle cx="8" cy="3" r="2" fill="#8a5f3c"/><path d="M2 5.2l6 2 6-2M8 7v2.5M8 9.5l-3.6 5M8 9.5l3.6 5" stroke="#8a5f3c" stroke-width="2.4" fill="none" stroke-linecap="round" stroke-linejoin="round"/></svg><div class="t" style="top:196.68px;height:20px;line-height:20px;left:1662.3px;color:#8c8c8c;">metarig</div><svg class="a" style="left:1723px;top:196.98px;" width="16" height="16" viewBox="0 0 16 16"><circle cx="9.5" cy="2.6" r="1.5" fill="none" stroke="#22705c" stroke-width="1.1"/><path d="M3 5.5l3-1.5 3.5 1.2 2 2.5 2.5-.2M9.5 5.2l-2 4 3.2 2.3.3 3.5M7.5 9.2l-2 2.3-3.5.5" stroke="#22705c" stroke-width="1.2" fill="none" stroke-linecap="round" stroke-linejoin="round"/></svg><svg class="a" style="left:1742.5px;top:196.98px;" width="16" height="16" viewBox="0 0 16 16"><rect x="1" y="2" width="4" height="4" fill="#22705c"/><circle cx="9.3" cy="2.7" r="1.5" fill="#22705c"/><path d="M5.5 5.2l3.8 1 3.7-1.5M9.3 6.2v3.3M9.3 9.5l-3.3 5M9.3 9.5l3 5" stroke="#22705c" stroke-width="1" fill="none" stroke-linecap="round"/></svg><svg class="a" style="left:1580px;top:216.96px;" width="16" height="16" viewBox="0 0 16 16"><rect x="1" y="2" width="4" height="4" fill="#dfe8ff"/><circle cx="9.3" cy="2.7" r="1.5" fill="#dfe8ff"/><path d="M5.5 5.2l3.8 1 3.7-1.5M9.3 6.2v3.3M9.3 9.5l-3.3 5M9.3 9.5l3 5" stroke="#dfe8ff" stroke-width="1" fill="none" stroke-linecap="round"/></svg><svg class="a" style="left:1625px;top:221.46px;" width="6" height="7" viewBox="0 0 6 7"><path d="M0 0L6 3.500 0 7z" fill="#e0e0e0"/></svg><div class="a" style="left:1638px;top:215.9px;width:19.7px;height:19px;background:#5e6a86;border-radius:4px;border:1px solid #7c88a4;"></div><svg class="a" style="left:1640px;top:216.96px;" width="16" height="16" viewBox="0 0 16 16"><circle cx="8" cy="3" r="2" fill="#f0a060"/><path d="M2 5.2l6 2 6-2M8 7v2.5M8 9.5l-3.6 5M8 9.5l3.6 5" stroke="#f0a060" stroke-width="2.4" fill="none" stroke-linecap="round" stroke-linejoin="round"/></svg><div class="t" style="top:216.66px;height:20px;line-height:20px;left:1662.3px;color:#f0c070;">rig</div><svg class="a" style="left:1697.5px;top:216.96px;" width="16" height="16" viewBox="0 0 16 16"><path d="M2 3h6c2 0 2 1.500 1 2.500L6 8.500c-1 1-1 2.500 1 2.500h6M10.500 8.300L13.300 11l-2.800 2.700" fill="none" stroke="#c8d0e0" stroke-width="1.200" stroke-linejoin="round" stroke-linecap="round"/></svg><div class="a" style="left:1715.6px;top:215.9px;width:19.4px;height:19px;background:#3a7a8a;border-radius:4px;border:1px solid #5296a2;"></div><svg class="a" style="left:1717.3px;top:216.96px;" width="16" height="16" viewBox="0 0 16 16"><circle cx="9.5" cy="2.6" r="1.5" fill="none" stroke="#44c0b0" stroke-width="1.1"/><path d="M3 5.5l3-1.5 3.5 1.2 2 2.5 2.5-.2M9.5 5.2l-2 4 3.2 2.3.3 3.5M7.5 9.2l-2 2.3-3.5.5" stroke="#44c0b0" stroke-width="1.2" fill="none" stroke-linecap="round" stroke-linejoin="round"/></svg><svg class="a" style="left:1736.8px;top:216.96px;" width="16" height="16" viewBox="0 0 16 16"><g transform="translate(16 0) scale(-1 1)"><path d="M3.500 9.800L9.800 3.500" stroke="#d0d6e6" stroke-width="3.200" stroke-linecap="round" transform="translate(1.400 1.400)"/><circle cx="3.300" cy="10.300" r="2" fill="#d0d6e6"/><circle cx="5.700" cy="12.700" r="2" fill="#d0d6e6"/><circle cx="10.300" cy="3.300" r="2" fill="#d0d6e6"/><circle cx="12.700" cy="5.700" r="2" fill="#d0d6e6"/></g></svg><svg class="a" style="left:1756.5px;top:216.96px;" width="16" height="16" viewBox="0 0 16 16"><rect x="1" y="2" width="4" height="4" fill="#44c8d8"/><circle cx="9.3" cy="2.7" r="1.5" fill="#44c8d8"/><path d="M5.5 5.2l3.8 1 3.7-1.5M9.3 6.2v3.3M9.3 9.5l-3.3 5M9.3 9.5l3 5" stroke="#44c8d8" stroke-width="1" fill="none" stroke-linecap="round"/></svg><svg class="a" style="left:1777px;top:216.96px;" width="16" height="16" viewBox="0 0 16 16"><path d="M2.500 3.500h11L8 13.500z" fill="none" stroke="#f0a060" stroke-width="3" stroke-linejoin="round"/></svg><svg class="a" style="left:1604.8px;top:241.44px;" width="6" height="7" viewBox="0 0 6 7"><path d="M0 0L6 3.500 0 7z" fill="#c8c8c8"/></svg><div class="a" style="left:1618.4px;top:236px;width:19.5px;height:19px;background:#3a3a3a;border-radius:4px;border:1px solid #5a5a5a;"></div><svg class="a" style="left:1620px;top:236.94px;" width="16" height="16" viewBox="0 0 16 16"><rect x="1.500" y="2" width="13" height="3.200" fill="#e6e6e6"/><path d="M2.500 6.200h11v8h-11z" fill="#e6e6e6"/><rect x="6" y="8" width="4" height="1.800" fill="#282828"/></svg><div class="t" style="top:236.64px;height:20px;line-height:20px;left:1642.3px;">Body</div><svg class="a" style="left:1689px;top:236.94px;" width="16" height="16" viewBox="0 0 16 16"><path d="M2.500 3.500h11L8 13.500z" fill="none" stroke="#e8954d" stroke-width="3" stroke-linejoin="round"/></svg><svg class="a" style="left:1834.8px;top:99.68px;" width="10.2" height="10.2" viewBox="0 0 10.2 10.2"><rect x="0.300" y="0.300" width="9.600" height="9.600" rx="0.800" fill="#e6e6e6"/><path d="M2.200 5.200l2.100 2.200L8 2.900" fill="none" stroke="#282828" stroke-width="1.600"/></svg><svg class="a" style="left:1852px;top:96.78px;" width="16" height="16" viewBox="0 0 16 16"><path d="M3 2.500l10.500 4.500-4.200 1.300L8.300 14z" fill="#e6e6e6"/></svg><svg class="a" style="left:1871.5px;top:96.78px;" width="16" height="16" viewBox="0 0 16 16"><path d="M1.800 8C4 3.600 12 3.600 14.200 8 12 12.400 4 12.400 1.800 8z" fill="none" stroke="#e6e6e6" stroke-width="1.700"/><circle cx="8" cy="8" r="2.100" fill="#e6e6e6"/></svg><svg class="a" style="left:1891.5px;top:96.78px;" width="16" height="16" viewBox="0 0 16 16"><path d="M1 4h3.500l1-1.800h5l1 1.800H15v9.500H1z" fill="#e6e6e6"/><circle cx="8" cy="8.600" r="3.400" fill="#282828"/><circle cx="8" cy="8.600" r="2.300" fill="#e6e6e6"/><circle cx="8" cy="8.600" r="1.100" fill="#282828"/></svg><svg class="a" style="left:1834.8px;top:119.66px;" width="10.2" height="10.2" viewBox="0 0 10.2 10.2"><rect x="0.700" y="0.700" width="8.800" height="8.800" rx="0.800" fill="none" stroke="#9a9a9a" stroke-width="1"/></svg><svg class="a" style="left:1852px;top:116.76px;" width="16" height="16" viewBox="0 0 16 16"><path d="M3 2.500l10.500 4.500-4.200 1.300L8.300 14z" fill="#7a7a7a"/></svg><svg class="a" style="left:1871.5px;top:116.76px;" width="16" height="16" viewBox="0 0 16 16"><path d="M1.800 8C4 3.600 12 3.600 14.200 8 12 12.400 4 12.400 1.800 8z" fill="none" stroke="#7a7a7a" stroke-width="1.700"/><circle cx="8" cy="8" r="2.100" fill="#7a7a7a"/></svg><svg class="a" style="left:1891.5px;top:116.76px;" width="16" height="16" viewBox="0 0 16 16"><path d="M1.500 4.500h3l1-1.500h5l1 1.500h3v9h-13z" fill="none" stroke="#6a6a6a" stroke-width="1"/><path d="M6 7l4 4M10 7l-4 4" stroke="#6a6a6a" stroke-width="1"/></svg><svg class="a" style="left:1852px;top:136.74px;" width="16" height="16" viewBox="0 0 16 16"><path d="M3.500 3l9 4-4 .8M3.500 3l3 10.500" fill="none" stroke="#b0b0b0" stroke-width="1"/></svg><svg class="a" style="left:1871.5px;top:136.74px;" width="16" height="16" viewBox="0 0 16 16"><path d="M1.800 8C4 3.600 12 3.600 14.200 8 12 12.400 4 12.400 1.800 8z" fill="none" stroke="#e6e6e6" stroke-width="1.700"/><circle cx="8" cy="8" r="2.100" fill="#e6e6e6"/></svg><svg class="a" style="left:1891.5px;top:136.74px;" width="16" height="16" viewBox="0 0 16 16"><path d="M1 4h3.500l1-1.800h5l1 1.800H15v9.500H1z" fill="#e6e6e6"/><circle cx="8" cy="8.600" r="3.400" fill="#282828"/><circle cx="8" cy="8.600" r="2.300" fill="#e6e6e6"/><circle cx="8" cy="8.600" r="1.100" fill="#282828"/></svg><svg class="a" style="left:1852px;top:156.72px;" width="16" height="16" viewBox="0 0 16 16"><path d="M3 2.500l10.500 4.500-4.200 1.300L8.300 14z" fill="#e6e6e6"/></svg><svg class="a" style="left:1871.5px;top:157.72px;" width="16" height="16" viewBox="0 0 16 16"><path d="M1.500 7C4 11.300 12 11.300 14.500 7" fill="none" stroke="#b0b0b0" stroke-width="1.100"/></svg><svg class="a" style="left:1891.5px;top:156.72px;" width="16" height="16" viewBox="0 0 16 16"><path d="M1 4h3.500l1-1.800h5l1 1.800H15v9.500H1z" fill="#e6e6e6"/><circle cx="8" cy="8.600" r="3.400" fill="#282828"/><circle cx="8" cy="8.600" r="2.300" fill="#e6e6e6"/><circle cx="8" cy="8.600" r="1.100" fill="#282828"/></svg><svg class="a" style="left:1852px;top:176.7px;" width="16" height="16" viewBox="0 0 16 16"><path d="M3 2.500l10.500 4.500-4.200 1.300L8.300 14z" fill="#e6e6e6"/></svg><svg class="a" style="left:1871.5px;top:176.7px;" width="16" height="16" viewBox="0 0 16 16"><path d="M1.800 8C4 3.600 12 3.600 14.200 8 12 12.400 4 12.400 1.800 8z" fill="none" stroke="#e6e6e6" stroke-width="1.700"/><circle cx="8" cy="8" r="2.100" fill="#e6e6e6"/></svg><svg class="a" style="left:1891.5px;top:176.7px;" width="16" height="16" viewBox="0 0 16 16"><path d="M1 4h3.500l1-1.800h5l1 1.800H15v9.500H1z" fill="#e6e6e6"/><circle cx="8" cy="8.600" r="3.400" fill="#282828"/><circle cx="8" cy="8.600" r="2.300" fill="#e6e6e6"/><circle cx="8" cy="8.600" r="1.100" fill="#282828"/></svg><svg class="a" style="left:1852px;top:196.68px;" width="16" height="16" viewBox="0 0 16 16"><path d="M3 2.500l10.500 4.500-4.200 1.300L8.300 14z" fill="#e6e6e6"/></svg><svg class="a" style="left:1871.5px;top:197.68px;" width="16" height="16" viewBox="0 0 16 16"><path d="M1.500 7C4 11.300 12 11.300 14.500 7" fill="none" stroke="#b0b0b0" stroke-width="1.100"/></svg><svg class="a" style="left:1891.5px;top:196.68px;" width="16" height="16" viewBox="0 0 16 16"><path d="M1 4h3.500l1-1.800h5l1 1.800H15v9.500H1z" fill="#e6e6e6"/><circle cx="8" cy="8.600" r="3.400" fill="#282828"/><circle cx="8" cy="8.600" r="2.300" fill="#e6e6e6"/><circle cx="8" cy="8.600" r="1.100" fill="#282828"/></svg><svg class="a" style="left:1852px;top:216.66px;" width="16" height="16" viewBox="0 0 16 16"><path d="M3 2.500l10.500 4.500-4.200 1.300L8.300 14z" fill="#e6e6e6"/></svg><svg class="a" style="left:1871.5px;top:216.66px;" width="16" height="16" viewBox="0 0 16 16"><path d="M1.800 8C4 3.600 12 3.600 14.200 8 12 12.400 4 12.400 1.800 8z" fill="none" stroke="#e6e6e6" stroke-width="1.700"/><circle cx="8" cy="8" r="2.100" fill="#e6e6e6"/></svg><svg class="a" style="left:1891.5px;top:216.66px;" width="16" height="16" viewBox="0 0 16 16"><path d="M1 4h3.500l1-1.800h5l1 1.800H15v9.500H1z" fill="#e6e6e6"/><circle cx="8" cy="8.600" r="3.400" fill="#282828"/><circle cx="8" cy="8.600" r="2.300" fill="#e6e6e6"/><circle cx="8" cy="8.600" r="1.100" fill="#282828"/></svg><svg class="a" style="left:1834.8px;top:239.54px;" width="10.2" height="10.2" viewBox="0 0 10.2 10.2"><rect x="0.300" y="0.300" width="9.600" height="9.600" rx="0.800" fill="#e6e6e6"/><path d="M2.200 5.200l2.100 2.200L8 2.900" fill="none" stroke="#282828" stroke-width="1.600"/></svg><svg class="a" style="left:1852px;top:236.64px;" width="16" height="16" viewBox="0 0 16 16"><path d="M3 2.500l10.500 4.500-4.200 1.300L8.300 14z" fill="#e6e6e6"/></svg><svg class="a" style="left:1871.5px;top:236.64px;" width="16" height="16" viewBox="0 0 16 16"><path d="M1.800 8C4 3.600 12 3.600 14.200 8 12 12.400 4 12.400 1.800 8z" fill="none" stroke="#e6e6e6" stroke-width="1.700"/><circle cx="8" cy="8" r="2.100" fill="#e6e6e6"/></svg><svg class="a" style="left:1891.5px;top:236.64px;" width="16" height="16" viewBox="0 0 16 16"><path d="M1 4h3.500l1-1.800h5l1 1.800H15v9.500H1z" fill="#e6e6e6"/><circle cx="8" cy="8.600" r="3.400" fill="#282828"/><circle cx="8" cy="8.600" r="2.300" fill="#e6e6e6"/><circle cx="8" cy="8.600" r="1.100" fill="#282828"/></svg></div></div><div class="a" style="left:1578.2px;top:364.8px;width:340.29999999999995px;height:663.7px;border-radius:5px;overflow:hidden;background:#303030"><div class="a" style="left:-1578.2px;top:-364.8px;width:1920px;height:1052px"><div class="a" style="left:1578.2px;top:390.5px;width:27.8px;height:640px;background:#1c1c1c;"></div><div class="a" style="left:1586.7px;top:368.3px;width:30.5px;height:17.7px;background:#2b2b2b;border-radius:4px;border:1px solid #3f3f3f;"></div><svg class="a" style="left:1589.5px;top:369px;" width="16" height="16" viewBox="0 0 16 16"><rect x="1.500" y="1.500" width="11" height="5.600" rx="2.800" fill="#e6e6e6"/><rect x="1.500" y="8.900" width="11" height="5.600" rx="2.800" fill="#e6e6e6"/><circle cx="9.700" cy="4.300" r="1.700" fill="#2b2b2b"/><circle cx="4.300" cy="11.700" r="1.700" fill="#2b2b2b"/></svg><svg class="a" style="left:1606.5px;top:374px;" width="10" height="8" viewBox="0 0 10 8"><path d="M2.2 2.2L5 5.0L7.8 2.2" fill="none" stroke="#d8d8d8" stroke-width="1.3" stroke-linecap="round" stroke-linejoin="round"/></svg><div class="a" style="left:1695px;top:368.3px;width:110px;height:17.7px;background:#1d1d1d;border-radius:4px;border:1px solid #3a3a3a;"></div><svg class="a" style="left:1697.5px;top:369px;" width="16" height="16" viewBox="0 0 16 16"><circle cx="9.800" cy="6" r="4.200" fill="none" stroke="#e6e6e6" stroke-width="1.300"/><path d="M6.800 9.200L2 14" stroke="#e6e6e6" stroke-width="1.400" stroke-linecap="round"/></svg><div class="a" style="left:1893px;top:368.3px;width:18.3px;height:17.7px;background:#2b2b2b;border-radius:4px;border:1px solid #3f3f3f;"></div><svg class="a" style="left:1897.2px;top:374px;" width="10" height="8" viewBox="0 0 10 8"><path d="M2.2 2.2L5 5.0L7.8 2.2" fill="none" stroke="#d8d8d8" stroke-width="1.3" stroke-linecap="round" stroke-linejoin="round"/></svg><svg class="a" style="left:1585px;top:403.5px;" width="16" height="16" viewBox="0 0 16 16"><path d="M4 2v7" stroke="#d8d8d8" stroke-width="1.300"/><rect x="2.300" y="9" width="3.400" height="5.500" rx="1.500" fill="#d8d8d8"/><path d="M11.500 7.500v6.500" stroke="#d8d8d8" stroke-width="2.600" stroke-linecap="round"/><path d="M9 1.800v3.200a2.500 2.500 0 0 0 5 0V1.800l-1.300 1v2h-2.400v-2z" fill="#d8d8d8" stroke="#d8d8d8" stroke-width=".8"/></svg><svg class="a" style="left:1585px;top:438.8px;" width="16" height="16" viewBox="0 0 16 16"><path d="M2 5h12v9H2z" fill="none" stroke="#d8d8d8" stroke-width="1.300"/><path d="M4.500 5V3h5v2M11 3.500h2.500V5" fill="none" stroke="#d8d8d8" stroke-width="1.200"/><path d="M4 8h6M4 10h6M4 12h6" stroke="#d8d8d8" stroke-width=".9"/><rect x="11.300" y="7.500" width="1.500" height="1.500" fill="#d8d8d8"/></svg><svg class="a" style="left:1585px;top:468px;" width="16" height="16" viewBox="0 0 16 16"><path d="M1.500 2h13v4h-2v-1.200h-9V6h-2z" fill="#d8d8d8"/><rect x="3.800" y="6.300" width="8.400" height="8" fill="#d8d8d8"/><path d="M5 13l2.200-3 1.500 1.800 1-1 1.300 2.200z" fill="#1d1d1d"/><circle cx="9.800" cy="8.600" r=".9" fill="#1d1d1d"/></svg><svg class="a" style="left:1585px;top:496px;" width="16" height="16" viewBox="0 0 16 16"><path d="M1.500 5v9.500H11M3.500 3.500v9H13" fill="none" stroke="#d8d8d8" stroke-width="1"/><rect x="5.500" y="1.500" width="9.500" height="9" fill="#d8d8d8"/><path d="M6.500 9l2.500-3.500 2 2.500 1-1 2 2z" fill="#282828"/><circle cx="12.500" cy="4" r="1" fill="#282828"/></svg><svg class="a" style="left:1585px;top:524px;" width="16" height="16" viewBox="0 0 16 16"><path d="M4.500 1.500C7 5 8 7 8 9a3.500 3.500 0 0 1-7 0c0-2 1-4 3.500-7.500z" fill="#d8d8d8" transform="translate(0 1)"/><circle cx="11.800" cy="3.800" r="2" fill="#d8d8d8"/><circle cx="11.300" cy="11" r="3.200" fill="#1d1d1d" stroke="#d8d8d8" stroke-width="1.100"/></svg><div class="a" style="left:1580.4px;top:547.7px;width:26px;height:25.2px;background:#303030;border-radius:4px 0 0 4px;"></div><svg class="a" style="left:1585px;top:552.3px;" width="16" height="16" viewBox="0 0 16 16"><circle cx="8" cy="8" r="5.800" fill="none" stroke="#d45c6c" stroke-width="1.200"/><path d="M5 4.500c1.500-.5 3 0 3.500 1.200.3 1-1 1.500-1.500 2.500s.5 2 0 3-2 .5-2.500-.5-1.500-2.500-1-4 1-2 1.500-2.200z" fill="#d45c6c"/><path d="M10.500 8.500c1-.5 2.500 0 2.800 1-.3 1.500-1.300 2.500-2.300 3-.8-.8-1.200-3-.5-4z" fill="#d45c6c"/><path d="M2 14.500l2-2M12.500 3.500l2-2" stroke="#d45c6c" stroke-width="1.100"/></svg><svg class="a" style="left:1585px;top:588.3px;" width="16" height="16" viewBox="0 0 16 16"><rect x="2" y="2.500" width="12" height="2.800" fill="none" stroke="#d8d8d8" stroke-width="1.200"/><rect x="3" y="5.300" width="10" height="8.200" fill="none" stroke="#d8d8d8" stroke-width="1.200"/><rect x="6" y="8" width="4" height="1.600" fill="#d8d8d8"/></svg><svg class="a" style="left:1585px;top:624px;" width="16" height="16" viewBox="0 0 16 16"><rect x="4" y="4" width="8" height="8" fill="#e8954d"/><path d="M1.500 4.500v-3h3M11.500 1.500h3v3M14.500 11.500v3h-3M4.500 14.500h-3v-3" fill="none" stroke="#e8954d" stroke-width="1.100"/></svg><svg class="a" style="left:1585px;top:653px;" width="16" height="16" viewBox="0 0 16 16"><circle cx="7.500" cy="8.500" r="5.500" fill="none" stroke="#7088c8" stroke-width="1.300" stroke-dasharray="26 8" transform="rotate(-20 7.500 8.500)"/><circle cx="7.500" cy="8.500" r="2.600" fill="#7088c8"/><circle cx="13" cy="3.500" r="1.500" fill="#7088c8"/></svg><svg class="a" style="left:1585px;top:680.5px;" width="16" height="16" viewBox="0 0 16 16"><path d="M3.800 6.500L11 2.300a2.900 2.900 0 0 1 3.200 4.200l-4.500 7a4.600 4.600 0 1 1-5.900-7z" fill="none" stroke="#7088c8" stroke-width="1.300"/><circle cx="6" cy="10" r="2.200" fill="none" stroke="#7088c8" stroke-width="1.300"/><circle cx="12" cy="4.500" r="1" fill="#7088c8"/></svg><svg class="a" style="left:1585px;top:708px;" width="16" height="16" viewBox="0 0 16 16"><circle cx="9.5" cy="2.6" r="1.5" fill="none" stroke="#2fb08a" stroke-width="1.1"/><path d="M3 5.5l3-1.5 3.5 1.2 2 2.5 2.5-.2M9.5 5.2l-2 4 3.2 2.3.3 3.5M7.5 9.2l-2 2.3-3.5.5" stroke="#2fb08a" stroke-width="1.2" fill="none" stroke-linecap="round" stroke-linejoin="round"/></svg><svg class="a" style="left:1585px;top:736.3px;" width="16" height="16" viewBox="0 0 16 16"><g transform="translate(16 0) scale(-1 1)"><path d="M3.500 9.800L9.800 3.500" stroke="#35b088" stroke-width="3.200" stroke-linecap="round" transform="translate(1.400 1.400)"/><circle cx="3.300" cy="10.300" r="2" fill="#35b088"/><circle cx="5.700" cy="12.700" r="2" fill="#35b088"/><circle cx="10.300" cy="3.300" r="2" fill="#35b088"/><circle cx="12.700" cy="5.700" r="2" fill="#35b088"/></g></svg><svg class="a" style="left:1585px;top:763.8px;" width="16" height="16" viewBox="0 0 16 16"><path d="M3.500 5l8 8" stroke="#7aa0e8" stroke-width="2" stroke-linecap="round"/><circle cx="3" cy="6" r="1.500" fill="#7aa0e8"/><circle cx="4.800" cy="4" r="1.500" fill="#7aa0e8"/><circle cx="11" cy="14" r="1.500" fill="#7aa0e8"/><circle cx="13" cy="12" r="1.500" fill="#7aa0e8"/><path d="M5.500 8.500c-1-3 1-5.500 4-5.500 3.500 0 5 3.500 3.500 6" fill="none" stroke="#7aa0e8" stroke-width="1.200"/><path d="M1.500 1.500l1.500 1.500M3 1.500L1.500 3" stroke="#7aa0e8" stroke-width=".9"/></svg><svg class="a" style="left:1585px;top:800px;" width="16" height="16" viewBox="0 0 16 16"><rect x="1.500" y="1.500" width="13" height="13" fill="#7a2a38"/><rect x="1.5" y="1.5" width="3.250" height="3.250" fill="#e0606e"/><rect x="1.5" y="8.0" width="3.250" height="3.250" fill="#e0606e"/><rect x="4.75" y="4.75" width="3.250" height="3.250" fill="#e0606e"/><rect x="4.75" y="11.25" width="3.250" height="3.250" fill="#e0606e"/><rect x="8.0" y="1.5" width="3.250" height="3.250" fill="#e0606e"/><rect x="8.0" y="8.0" width="3.250" height="3.250" fill="#e0606e"/><rect x="11.25" y="4.75" width="3.250" height="3.250" fill="#e0606e"/><rect x="11.25" y="11.25" width="3.250" height="3.250" fill="#e0606e"/></svg><svg class="a" style="left:1616px;top:399.5px;" width="16" height="16" viewBox="0 0 16 16"><path d="M4.500 1.500C7 5 8 7 8 9a3.500 3.500 0 0 1-7 0c0-2 1-4 3.500-7.500z" fill="#e6e6e6" transform="translate(0 1)"/><circle cx="11.800" cy="3.800" r="2" fill="#e6e6e6"/><circle cx="11.300" cy="11" r="3.200" fill="#1d1d1d" stroke="#e6e6e6" stroke-width="1.100"/></svg><div class="t" style="top:398.8px;height:20px;line-height:20px;left:1640px;">Scene</div><svg class="a" style="left:1685.5px;top:403px;" width="8" height="10" viewBox="0 0 8 10"><path d="M2.2 1.4L5.8 5L2.2 8.6" fill="none" stroke="#c8c8c8" stroke-width="1.1" stroke-linecap="round" stroke-linejoin="round"/></svg><svg class="a" style="left:1701px;top:399.8px;" width="16" height="16" viewBox="0 0 16 16"><circle cx="8" cy="8" r="5.800" fill="none" stroke="#e6e6e6" stroke-width="1.200"/><path d="M5 4.500c1.500-.5 3 0 3.500 1.200.3 1-1 1.500-1.500 2.500s.5 2 0 3-2 .5-2.500-.5-1.500-2.500-1-4 1-2 1.500-2.200z" fill="#e6e6e6"/><path d="M10.500 8.500c1-.5 2.500 0 2.800 1-.3 1.500-1.300 2.500-2.300 3-.8-.8-1.200-3-.5-4z" fill="#e6e6e6"/><path d="M2 14.500l2-2M12.500 3.500l2-2" stroke="#e6e6e6" stroke-width="1.100"/></svg><div class="t" style="top:398.8px;height:20px;line-height:20px;left:1725.6px;">World sky texture Nishta</div><svg class="a" style="left:1894.5px;top:399.5px;" width="16" height="16" viewBox="0 0 16 16"><path d="M9.500 1.500l5 5-1.500.5-2.500 2.500.3 3L9 14 5.500 10.500 2 14M5.500 10.500L2 7l1.500-1.500 3 .3L9 3.300z" fill="none" stroke="#8a8a8a" stroke-width="1.100" stroke-linejoin="round"/></svg><div class="a" style="left:1616.7px;top:435px;width:29px;height:18px;background:#2b2b2b;border-radius:4px 0 0 4px;border:1px solid #3f3f3f;border-right:none;"></div><svg class="a" style="left:1619.5px;top:436px;" width="16" height="16" viewBox="0 0 16 16"><circle cx="8" cy="8" r="5.800" fill="none" stroke="#e6e6e6" stroke-width="1.200"/><path d="M5 4.500c1.500-.5 3 0 3.500 1.200.3 1-1 1.500-1.500 2.500s.5 2 0 3-2 .5-2.500-.5-1.500-2.500-1-4 1-2 1.500-2.200z" fill="#e6e6e6"/><path d="M10.500 8.500c1-.5 2.500 0 2.800 1-.3 1.500-1.300 2.500-2.300 3-.8-.8-1.200-3-.5-4z" fill="#e6e6e6"/><path d="M2 14.500l2-2M12.500 3.500l2-2" stroke="#e6e6e6" stroke-width="1.100"/></svg><svg class="a" style="left:1635px;top:440.8px;" width="10" height="8" viewBox="0 0 10 8"><path d="M2.2 2.2L5 5.0L7.8 2.2" fill="none" stroke="#d8d8d8" stroke-width="1.3" stroke-linecap="round" stroke-linejoin="round"/></svg><div class="a" style="left:1645.7px;top:435px;width:205.5px;height:18px;background:#1d1d1d;border:1px solid #3a3a3a;border-left:none;border-right:none;"></div><div class="t" style="top:434.8px;height:20px;line-height:20px;left:1653px;">World sky texture Nishta</div><div class="a" style="left:1851.7px;top:435px;width:19.3px;height:18px;background:#555555;"></div><svg class="a" style="left:1853.3px;top:436px;" width="16" height="16" viewBox="0 0 16 16"><path d="M8 1.800c2 1 4 1.200 5.500 1.200 0 5-1 8.500-5.500 11C3.500 11.500 2.500 8 2.500 3c1.500 0 3.500-.2 5.500-1.200z" fill="none" stroke="#8a8a8a" stroke-width="1.100"/></svg><div class="a" style="left:1871.7px;top:435px;width:19.4px;height:18px;background:#555555;"></div><svg class="a" style="left:1873.4px;top:436px;" width="16" height="16" viewBox="0 0 16 16"><path d="M5.500 1.500h6l3 3v7h-9z" fill="none" stroke="#e0e0e0" stroke-width="1.100"/><path d="M11 1.500v3.500h3.500" fill="none" stroke="#e0e0e0" stroke-width="1"/><path d="M3.500 4.500H2v10h9v-1.500" fill="none" stroke="#e0e0e0" stroke-width="1.100"/></svg><div class="a" style="left:1891.8px;top:435px;width:19.4px;height:18px;background:#555555;border-radius:0 4px 4px 0;"></div><svg class="a" style="left:1893.5px;top:436px;" width="16" height="16" viewBox="0 0 16 16"><path d="M4.4 4.4L11.6 11.6M11.6 4.4L4.4 11.6" stroke="#e6e6e6" stroke-width="1.2"/></svg><div class="a" style="left:1614.9px;top:464.5px;width:297.1px;height:24.3px;background:#3d3d3d;border-radius:4px;"></div><svg class="a" style="left:1623.5px;top:471.7px;" width="8" height="10" viewBox="0 0 8 10"><path d="M2.2 1.4L5.8 5L2.2 8.6" fill="none" stroke="#c8c8c8" stroke-width="1.1" stroke-linecap="round" stroke-linejoin="round"/></svg><div class="t" style="top:467.4px;height:20px;line-height:20px;left:1636.5px;">Preview</div><svg class="a" style="left:1894.5px;top:473.9px;" width="11" height="6" viewBox="0 0 11 6"><rect x="0" y="0.0" width="1.4" height="1.4" fill="#2a2a2a"/><rect x="0" y="3.5" width="1.4" height="1.4" fill="#2a2a2a"/><rect x="3" y="0.0" width="1.4" height="1.4" fill="#2a2a2a"/><rect x="3" y="3.5" width="1.4" height="1.4" fill="#2a2a2a"/><rect x="6" y="0.0" width="1.4" height="1.4" fill="#2a2a2a"/><rect x="6" y="3.5" width="1.4" height="1.4" fill="#2a2a2a"/><rect x="9" y="0.0" width="1.4" height="1.4" fill="#2a2a2a"/><rect x="9" y="3.5" width="1.4" height="1.4" fill="#2a2a2a"/></svg><div class="a" style="left:1614.9px;top:491.4px;width:297.1px;height:350.8px;background:#3d3d3d;border-radius:4px;"></div><svg class="a" style="left:1622.3px;top:499.9px;" width="10" height="8" viewBox="0 0 10 8"><path d="M1.4 1.7999999999999998L5 5.3999999999999995L8.6 1.7999999999999998" fill="none" stroke="#c8c8c8" stroke-width="1.1" stroke-linecap="round" stroke-linejoin="round"/></svg><div class="t" style="top:494.3px;height:20px;line-height:20px;left:1636.5px;">Surface</div><svg class="a" style="left:1894.5px;top:500.8px;" width="11" height="6" viewBox="0 0 11 6"><rect x="0" y="0.0" width="1.4" height="1.4" fill="#2a2a2a"/><rect x="0" y="3.5" width="1.4" height="1.4" fill="#2a2a2a"/><rect x="3" y="0.0" width="1.4" height="1.4" fill="#2a2a2a"/><rect x="3" y="3.5" width="1.4" height="1.4" fill="#2a2a2a"/><rect x="6" y="0.0" width="1.4" height="1.4" fill="#2a2a2a"/><rect x="6" y="3.5" width="1.4" height="1.4" fill="#2a2a2a"/><rect x="9" y="0.0" width="1.4" height="1.4" fill="#2a2a2a"/><rect x="9" y="3.5" width="1.4" height="1.4" fill="#2a2a2a"/></svg><div class="a" style="left:1614.9px;top:846px;width:297.1px;height:24px;background:#3d3d3d;border-radius:4px;"></div><svg class="a" style="left:1623.5px;top:853.2px;" width="8" height="10" viewBox="0 0 8 10"><path d="M2.2 1.4L5.8 5L2.2 8.6" fill="none" stroke="#c8c8c8" stroke-width="1.1" stroke-linecap="round" stroke-linejoin="round"/></svg><div class="t" style="top:848.9px;height:20px;line-height:20px;left:1636.5px;">Volume</div><svg class="a" style="left:1894.5px;top:855.4px;" width="11" height="6" viewBox="0 0 11 6"><rect x="0" y="0.0" width="1.4" height="1.4" fill="#2a2a2a"/><rect x="0" y="3.5" width="1.4" height="1.4" fill="#2a2a2a"/><rect x="3" y="0.0" width="1.4" height="1.4" fill="#2a2a2a"/><rect x="3" y="3.5" width="1.4" height="1.4" fill="#2a2a2a"/><rect x="6" y="0.0" width="1.4" height="1.4" fill="#2a2a2a"/><rect x="6" y="3.5" width="1.4" height="1.4" fill="#2a2a2a"/><rect x="9" y="0.0" width="1.4" height="1.4" fill="#2a2a2a"/><rect x="9" y="3.5" width="1.4" height="1.4" fill="#2a2a2a"/></svg><div class="a" style="left:1614.9px;top:873px;width:297.1px;height:24.2px;background:#3d3d3d;border-radius:4px;"></div><svg class="a" style="left:1623.5px;top:880.2px;" width="8" height="10" viewBox="0 0 8 10"><path d="M2.2 1.4L5.8 5L2.2 8.6" fill="none" stroke="#c8c8c8" stroke-width="1.1" stroke-linecap="round" stroke-linejoin="round"/></svg><div class="t" style="top:875.9px;height:20px;line-height:20px;left:1636.5px;">Ray Visibility</div><svg class="a" style="left:1894.5px;top:882.4px;" width="11" height="6" viewBox="0 0 11 6"><rect x="0" y="0.0" width="1.4" height="1.4" fill="#2a2a2a"/><rect x="0" y="3.5" width="1.4" height="1.4" fill="#2a2a2a"/><rect x="3" y="0.0" width="1.4" height="1.4" fill="#2a2a2a"/><rect x="3" y="3.5" width="1.4" height="1.4" fill="#2a2a2a"/><rect x="6" y="0.0" width="1.4" height="1.4" fill="#2a2a2a"/><rect x="6" y="3.5" width="1.4" height="1.4" fill="#2a2a2a"/><rect x="9" y="0.0" width="1.4" height="1.4" fill="#2a2a2a"/><rect x="9" y="3.5" width="1.4" height="1.4" fill="#2a2a2a"/></svg><div class="a" style="left:1614.9px;top:900px;width:297.1px;height:24px;background:#3d3d3d;border-radius:4px;"></div><svg class="a" style="left:1623.5px;top:907.2px;" width="8" height="10" viewBox="0 0 8 10"><path d="M2.2 1.4L5.8 5L2.2 8.6" fill="none" stroke="#c8c8c8" stroke-width="1.1" stroke-linecap="round" stroke-linejoin="round"/></svg><div class="t" style="top:902.9px;height:20px;line-height:20px;left:1636.5px;">Settings</div><svg class="a" style="left:1894.5px;top:909.4px;" width="11" height="6" viewBox="0 0 11 6"><rect x="0" y="0.0" width="1.4" height="1.4" fill="#2a2a2a"/><rect x="0" y="3.5" width="1.4" height="1.4" fill="#2a2a2a"/><rect x="3" y="0.0" width="1.4" height="1.4" fill="#2a2a2a"/><rect x="3" y="3.5" width="1.4" height="1.4" fill="#2a2a2a"/><rect x="6" y="0.0" width="1.4" height="1.4" fill="#2a2a2a"/><rect x="6" y="3.5" width="1.4" height="1.4" fill="#2a2a2a"/><rect x="9" y="0.0" width="1.4" height="1.4" fill="#2a2a2a"/><rect x="9" y="3.5" width="1.4" height="1.4" fill="#2a2a2a"/></svg><div class="a" style="left:1614.9px;top:927px;width:297.1px;height:24px;background:#3d3d3d;border-radius:4px;"></div><svg class="a" style="left:1623.5px;top:934.2px;" width="8" height="10" viewBox="0 0 8 10"><path d="M2.2 1.4L5.8 5L2.2 8.6" fill="none" stroke="#c8c8c8" stroke-width="1.1" stroke-linecap="round" stroke-linejoin="round"/></svg><div class="t" style="top:929.9px;height:20px;line-height:20px;left:1636.5px;">Viewport Display</div><svg class="a" style="left:1894.5px;top:936.4px;" width="11" height="6" viewBox="0 0 11 6"><rect x="0" y="0.0" width="1.4" height="1.4" fill="#2a2a2a"/><rect x="0" y="3.5" width="1.4" height="1.4" fill="#2a2a2a"/><rect x="3" y="0.0" width="1.4" height="1.4" fill="#2a2a2a"/><rect x="3" y="3.5" width="1.4" height="1.4" fill="#2a2a2a"/><rect x="6" y="0.0" width="1.4" height="1.4" fill="#2a2a2a"/><rect x="6" y="3.5" width="1.4" height="1.4" fill="#2a2a2a"/><rect x="9" y="0.0" width="1.4" height="1.4" fill="#2a2a2a"/><rect x="9" y="3.5" width="1.4" height="1.4" fill="#2a2a2a"/></svg><div class="a" style="left:1614.9px;top:954px;width:297.1px;height:24px;background:#3d3d3d;border-radius:4px;"></div><svg class="a" style="left:1623.5px;top:961.2px;" width="8" height="10" viewBox="0 0 8 10"><path d="M2.2 1.4L5.8 5L2.2 8.6" fill="none" stroke="#c8c8c8" stroke-width="1.1" stroke-linecap="round" stroke-linejoin="round"/></svg><div class="t" style="top:956.9px;height:20px;line-height:20px;left:1636.5px;">Custom Properties</div><svg class="a" style="left:1894.5px;top:963.4px;" width="11" height="6" viewBox="0 0 11 6"><rect x="0" y="0.0" width="1.4" height="1.4" fill="#2a2a2a"/><rect x="0" y="3.5" width="1.4" height="1.4" fill="#2a2a2a"/><rect x="3" y="0.0" width="1.4" height="1.4" fill="#2a2a2a"/><rect x="3" y="3.5" width="1.4" height="1.4" fill="#2a2a2a"/><rect x="6" y="0.0" width="1.4" height="1.4" fill="#2a2a2a"/><rect x="6" y="3.5" width="1.4" height="1.4" fill="#2a2a2a"/><rect x="9" y="0.0" width="1.4" height="1.4" fill="#2a2a2a"/><rect x="9" y="3.5" width="1.4" height="1.4" fill="#2a2a2a"/></svg><div class="t" style="top:524.8px;height:20px;line-height:20px;right:197.7px;">Surface</div><div class="a" style="left:1732.1px;top:525.8px;width:150.8px;height:17.3px;background:#282828;border-radius:4px;"></div><div class="a" style="left:1736.7px;top:530.2px;width:8px;height:8px;background:#6fc073;border-radius:4px;border:1px solid #161616;"></div><div class="t" style="top:524.8px;height:20px;line-height:20px;left:1753.3px;">Background</div><svg class="a" style="left:1628.1px;top:566.8px;" width="7" height="6" viewBox="0 0 7 6"><path d="M0 0H7L3.500 6z" fill="#e6e6e6"/></svg><div class="t" style="top:560.8px;height:20px;line-height:20px;right:197.7px;">Color</div><div class="a" style="left:1732.1px;top:560.6px;width:150.8px;height:18.4px;background:#33476d;border-radius:4px;"></div><div class="a" style="left:1736.7px;top:565.8px;width:8px;height:8px;background:#cfcd55;border-radius:4px;border:1px solid #161616;"></div><div class="t" style="top:560.8px;height:20px;line-height:20px;left:1753.3px;">Sky Texture</div><div class="a" style="left:1732.1px;top:586.7px;width:150.8px;height:17.3px;background:#282828;border-radius:4px;border:1px solid #3a3a3a;"></div><div class="t" style="top:586px;height:20px;line-height:20px;left:1739.4px;">Nishita</div><svg class="a" style="left:1871.5px;top:592px;" width="10" height="8" viewBox="0 0 10 8"><path d="M2.2 2.2L5 5.0L7.8 2.2" fill="none" stroke="#d8d8d8" stroke-width="1.3" stroke-linecap="round" stroke-linejoin="round"/></svg><div class="a" style="left:1892px;top:593.3px;width:4px;height:4px;background:#d0d0d0;border-radius:2px;"></div><div class="a" style="left:1732.1px;top:614.2px;width:12px;height:12px;background:#4772b3;border-radius:3px;"></div><svg class="a" style="left:1732.1px;top:614.2px;" width="12" height="12" viewBox="0 0 12 12"><path d="M2.800 6.200l2.400 2.500 4.200-5.200" fill="none" stroke="#fff" stroke-width="1.500"/></svg><div class="t" style="top:611px;height:20px;line-height:20px;left:1748.4px;">Sun Disc</div><div class="a" style="left:1892px;top:618.3px;width:4px;height:4px;background:#d0d0d0;border-radius:2px;"></div><div class="t" style="top:636.3px;height:20px;line-height:20px;right:197.7px;">Sun Size</div><div class="a" style="left:1732.1px;top:636.4px;width:150.8px;height:17.8px;background:#565656;border-radius:4px 4px 0 0;"></div><div class="t" style="top:636.3px;height:20px;line-height:20px;left:1657.5px;width:300px;text-align:center;"><span class="n">18.6</span>°</div><div class="a" style="left:1892px;top:643.3px;width:4px;height:4px;background:#d0d0d0;border-radius:2px;"></div><div class="t" style="top:655.55px;height:20px;line-height:20px;right:197.7px;">Sun Intensity</div><div class="a" style="left:1732.1px;top:655.6px;width:150.8px;height:17.9px;background:#565656;border-radius:0 0 4px 4px;"></div><div class="t" style="top:655.55px;height:20px;line-height:20px;left:1657.5px;width:300px;text-align:center;"><span class="n">9.200</span></div><div class="a" style="left:1892px;top:662.55px;width:4px;height:4px;background:#d0d0d0;border-radius:2px;"></div><div class="t" style="top:681.3px;height:20px;line-height:20px;right:197.7px;">Sun Elevation</div><div class="a" style="left:1732.1px;top:681.5px;width:150.8px;height:17.6px;background:#565656;border-radius:4px 4px 0 0;"></div><div class="t" style="top:681.3px;height:20px;line-height:20px;left:1657.5px;width:300px;text-align:center;"><span class="n">9.9</span>°</div><div class="a" style="left:1892px;top:688.3px;width:4px;height:4px;background:#d0d0d0;border-radius:2px;"></div><div class="t" style="top:700.6px;height:20px;line-height:20px;right:197.7px;">Sun Rotation</div><div class="a" style="left:1732.1px;top:700.5px;width:150.8px;height:18.2px;background:#565656;border-radius:0 0 4px 4px;"></div><div class="t" style="top:700.6px;height:20px;line-height:20px;left:1657.5px;width:300px;text-align:center;"><span class="n">4.9</span>°</div><div class="a" style="left:1892px;top:707.6px;width:4px;height:4px;background:#d0d0d0;border-radius:2px;"></div><div class="t" style="top:726.3px;height:20px;line-height:20px;right:197.7px;">Altitude</div><div class="a" style="left:1732.1px;top:726.4px;width:150.8px;height:17.8px;background:#565656;border-radius:4px;"></div><div class="t" style="top:726.3px;height:20px;line-height:20px;left:1657.5px;width:300px;text-align:center;"><span class="n">0</span> m</div><div class="a" style="left:1892px;top:733.3px;width:4px;height:4px;background:#d0d0d0;border-radius:2px;"></div><div class="t" style="top:751.2px;height:20px;line-height:20px;right:197.7px;">Air</div><div class="a" style="left:1732.1px;top:751.4px;width:150.8px;height:17.7px;background:#565656;border-radius:4px 4px 0 0;"></div><div class="a" style="left:1732.1px;top:751.4px;width:75.5px;height:17.7px;background:#4772b3;border-radius:4px 0 0 0;"></div><div class="t" style="top:751.2px;height:20px;line-height:20px;left:1657.5px;width:300px;text-align:center;"><span class="n">5.088</span></div><div class="a" style="left:1892px;top:758.2px;width:4px;height:4px;background:#d0d0d0;border-radius:2px;"></div><div class="t" style="top:770.6px;height:20px;line-height:20px;right:197.7px;">Dust</div><div class="a" style="left:1732.1px;top:770.3px;width:150.8px;height:18.6px;background:#565656;"></div><div class="t" style="top:770.6px;height:20px;line-height:20px;left:1657.5px;width:300px;text-align:center;"><span class="n">0.000</span></div><div class="a" style="left:1892px;top:777.6px;width:4px;height:4px;background:#d0d0d0;border-radius:2px;"></div><div class="t" style="top:790.5px;height:20px;line-height:20px;right:197.7px;">Ozone</div><div class="a" style="left:1732.1px;top:790.3px;width:150.8px;height:18.4px;background:#4772b3;border-radius:0 0 4px 4px;"></div><div class="t" style="top:790.5px;height:20px;line-height:20px;left:1657.5px;width:300px;text-align:center;color:#ffffff;"><span class="n">10.000</span></div><div class="a" style="left:1892px;top:797.5px;width:4px;height:4px;background:#d0d0d0;border-radius:2px;"></div><div class="t" style="top:816.3px;height:20px;line-height:20px;right:197.7px;">Strength</div><div class="a" style="left:1732.1px;top:816.7px;width:150.8px;height:17.4px;background:#565656;border-radius:4px;"></div><div class="a" style="left:1732.1px;top:816.7px;width:18.6px;height:17.4px;background:#2b2b2b;border-radius:4px 0 0 4px;"></div><svg class="a" style="left:1737px;top:821px;" width="9" height="9" viewBox="0 0 9 9"><circle cx="4.400" cy="4.400" r="3.300" fill="#aaaaaa"/></svg><div class="t" style="top:816.3px;height:20px;line-height:20px;left:1667px;width:300px;text-align:center;"><span class="n">0.900</span></div><div class="a" style="left:1892px;top:823.3px;width:4px;height:4px;background:#d0d0d0;border-radius:2px;"></div></div></div><div class="a" style="left:1px;top:925.3px;width:1573.5px;height:103.20000000000005px;border-radius:5px;overflow:hidden;background:#252525"><div class="a" style="left:-1px;top:-925.3px;width:1920px;height:1052px"><div class="a" style="left:0px;top:925px;width:1576px;height:25.8px;background:#303030;"></div><div class="a" style="left:0px;top:950.8px;width:1576px;height:23px;background:#1f1f1f;"></div><div class="a" style="left:52.443px;top:973.8px;width:1464.25px;height:56px;background:#2e2e2e;"></div><div class="a" style="left:23px;top:973.8px;width:1px;height:56px;background:#202020;"></div><div class="a" style="left:52px;top:973.8px;width:1px;height:56px;background:#1f1f1f;"></div><div class="a" style="left:81px;top:973.8px;width:1px;height:56px;background:#282828;"></div><div class="a" style="left:111px;top:973.8px;width:1px;height:56px;background:#1f1f1f;"></div><div class="a" style="left:140px;top:973.8px;width:1px;height:56px;background:#282828;"></div><div class="a" style="left:169px;top:973.8px;width:1px;height:56px;background:#1f1f1f;"></div><div class="a" style="left:198px;top:973.8px;width:1px;height:56px;background:#282828;"></div><div class="a" style="left:228px;top:973.8px;width:1px;height:56px;background:#1f1f1f;"></div><div class="a" style="left:257px;top:973.8px;width:1px;height:56px;background:#282828;"></div><div class="a" style="left:286px;top:973.8px;width:1px;height:56px;background:#1f1f1f;"></div><div class="a" style="left:316px;top:973.8px;width:1px;height:56px;background:#282828;"></div><div class="a" style="left:345px;top:973.8px;width:1px;height:56px;background:#1f1f1f;"></div><div class="a" style="left:374px;top:973.8px;width:1px;height:56px;background:#282828;"></div><div class="a" style="left:403px;top:973.8px;width:1px;height:56px;background:#1f1f1f;"></div><div class="a" style="left:433px;top:973.8px;width:1px;height:56px;background:#282828;"></div><div class="a" style="left:462px;top:973.8px;width:1px;height:56px;background:#1f1f1f;"></div><div class="a" style="left:491px;top:973.8px;width:1px;height:56px;background:#282828;"></div><div class="a" style="left:521px;top:973.8px;width:1px;height:56px;background:#1f1f1f;"></div><div class="a" style="left:550px;top:973.8px;width:1px;height:56px;background:#282828;"></div><div class="a" style="left:579px;top:973.8px;width:1px;height:56px;background:#1f1f1f;"></div><div class="a" style="left:608px;top:973.8px;width:1px;height:56px;background:#282828;"></div><div class="a" style="left:638px;top:973.8px;width:1px;height:56px;background:#1f1f1f;"></div><div class="a" style="left:667px;top:973.8px;width:1px;height:56px;background:#282828;"></div><div class="a" style="left:696px;top:973.8px;width:1px;height:56px;background:#1f1f1f;"></div><div class="a" style="left:725px;top:973.8px;width:1px;height:56px;background:#282828;"></div><div class="a" style="left:755px;top:973.8px;width:1px;height:56px;background:#1f1f1f;"></div><div class="a" style="left:784px;top:973.8px;width:1px;height:56px;background:#282828;"></div><div class="a" style="left:813px;top:973.8px;width:1px;height:56px;background:#1f1f1f;"></div><div class="a" style="left:843px;top:973.8px;width:1px;height:56px;background:#282828;"></div><div class="a" style="left:872px;top:973.8px;width:1px;height:56px;background:#1f1f1f;"></div><div class="a" style="left:901px;top:973.8px;width:1px;height:56px;background:#282828;"></div><div class="a" style="left:930px;top:973.8px;width:1px;height:56px;background:#1f1f1f;"></div><div class="a" style="left:960px;top:973.8px;width:1px;height:56px;background:#282828;"></div><div class="a" style="left:989px;top:973.8px;width:1px;height:56px;background:#1f1f1f;"></div><div class="a" style="left:1018px;top:973.8px;width:1px;height:56px;background:#282828;"></div><div class="a" style="left:1048px;top:973.8px;width:1px;height:56px;background:#1f1f1f;"></div><div class="a" style="left:1077px;top:973.8px;width:1px;height:56px;background:#282828;"></div><div class="a" style="left:1106px;top:973.8px;width:1px;height:56px;background:#1f1f1f;"></div><div class="a" style="left:1135px;top:973.8px;width:1px;height:56px;background:#282828;"></div><div class="a" style="left:1165px;top:973.8px;width:1px;height:56px;background:#1f1f1f;"></div><div class="a" style="left:1194px;top:973.8px;width:1px;height:56px;background:#282828;"></div><div class="a" style="left:1223px;top:973.8px;width:1px;height:56px;background:#1f1f1f;"></div><div class="a" style="left:1253px;top:973.8px;width:1px;height:56px;background:#282828;"></div><div class="a" style="left:1282px;top:973.8px;width:1px;height:56px;background:#1f1f1f;"></div><div class="a" style="left:1311px;top:973.8px;width:1px;height:56px;background:#282828;"></div><div class="a" style="left:1340px;top:973.8px;width:1px;height:56px;background:#1f1f1f;"></div><div class="a" style="left:1370px;top:973.8px;width:1px;height:56px;background:#282828;"></div><div class="a" style="left:1399px;top:973.8px;width:1px;height:56px;background:#1f1f1f;"></div><div class="a" style="left:1428px;top:973.8px;width:1px;height:56px;background:#282828;"></div><div class="a" style="left:1458px;top:973.8px;width:1px;height:56px;background:#1f1f1f;"></div><div class="a" style="left:1487px;top:973.8px;width:1px;height:56px;background:#282828;"></div><div class="a" style="left:1516px;top:973.8px;width:1px;height:56px;background:#1f1f1f;"></div><div class="a" style="left:1545px;top:973.8px;width:1px;height:56px;background:#202020;"></div><div class="a" style="left:1516px;top:973.8px;width:1px;height:56px;background:#101010;"></div><div class="t" style="top:953.5px;height:20px;line-height:20px;left:-39.787px;width:300px;text-align:center;color:#c4c4c4;"><span class="n">10</span></div><div class="t" style="top:953.5px;height:20px;line-height:20px;left:18.783px;width:300px;text-align:center;color:#c4c4c4;"><span class="n">20</span></div><div class="t" style="top:953.5px;height:20px;line-height:20px;left:77.353px;width:300px;text-align:center;color:#c4c4c4;"><span class="n">30</span></div><div class="t" style="top:953.5px;height:20px;line-height:20px;left:135.923px;width:300px;text-align:center;color:#c4c4c4;"><span class="n">40</span></div><div class="t" style="top:953.5px;height:20px;line-height:20px;left:194.493px;width:300px;text-align:center;color:#c4c4c4;"><span class="n">50</span></div><div class="t" style="top:953.5px;height:20px;line-height:20px;left:253.063px;width:300px;text-align:center;color:#c4c4c4;"><span class="n">60</span></div><div class="t" style="top:953.5px;height:20px;line-height:20px;left:311.633px;width:300px;text-align:center;color:#c4c4c4;"><span class="n">70</span></div><div class="t" style="top:953.5px;height:20px;line-height:20px;left:370.203px;width:300px;text-align:center;color:#c4c4c4;"><span class="n">80</span></div><div class="t" style="top:953.5px;height:20px;line-height:20px;left:428.773px;width:300px;text-align:center;color:#c4c4c4;"><span class="n">90</span></div><div class="t" style="top:953.5px;height:20px;line-height:20px;left:487.343px;width:300px;text-align:center;color:#c4c4c4;"><span class="n">100</span></div><div class="t" style="top:953.5px;height:20px;line-height:20px;left:545.913px;width:300px;text-align:center;color:#c4c4c4;"><span class="n">110</span></div><div class="t" style="top:953.5px;height:20px;line-height:20px;left:604.483px;width:300px;text-align:center;color:#c4c4c4;"><span class="n">120</span></div><div class="t" style="top:953.5px;height:20px;line-height:20px;left:663.053px;width:300px;text-align:center;color:#c4c4c4;"><span class="n">130</span></div><div class="t" style="top:953.5px;height:20px;line-height:20px;left:721.623px;width:300px;text-align:center;color:#c4c4c4;"><span class="n">140</span></div><div class="t" style="top:953.5px;height:20px;line-height:20px;left:780.193px;width:300px;text-align:center;color:#c4c4c4;"><span class="n">150</span></div><div class="t" style="top:953.5px;height:20px;line-height:20px;left:838.763px;width:300px;text-align:center;color:#c4c4c4;"><span class="n">160</span></div><div class="t" style="top:953.5px;height:20px;line-height:20px;left:897.333px;width:300px;text-align:center;color:#c4c4c4;"><span class="n">170</span></div><div class="t" style="top:953.5px;height:20px;line-height:20px;left:955.903px;width:300px;text-align:center;color:#c4c4c4;"><span class="n">180</span></div><div class="t" style="top:953.5px;height:20px;line-height:20px;left:1014.47px;width:300px;text-align:center;color:#c4c4c4;"><span class="n">190</span></div><div class="t" style="top:953.5px;height:20px;line-height:20px;left:1073.04px;width:300px;text-align:center;color:#c4c4c4;"><span class="n">200</span></div><div class="t" style="top:953.5px;height:20px;line-height:20px;left:1131.61px;width:300px;text-align:center;color:#c4c4c4;"><span class="n">210</span></div><div class="t" style="top:953.5px;height:20px;line-height:20px;left:1190.18px;width:300px;text-align:center;color:#c4c4c4;"><span class="n">220</span></div><div class="t" style="top:953.5px;height:20px;line-height:20px;left:1248.75px;width:300px;text-align:center;color:#c4c4c4;"><span class="n">230</span></div><div class="t" style="top:953.5px;height:20px;line-height:20px;left:1307.32px;width:300px;text-align:center;color:#c4c4c4;"><span class="n">240</span></div><div class="t" style="top:953.5px;height:20px;line-height:20px;left:1365.89px;width:300px;text-align:center;color:#c4c4c4;"><span class="n">250</span></div><div class="a" style="left:58.3px;top:966px;width:1.5px;height:60px;background:#4772b3;"></div><div class="a" style="left:46.5px;top:954.2px;width:24.4px;height:16.8px;background:#4772b3;border-radius:4px;"></div><div class="t" style="top:953.5px;height:20px;line-height:20px;left:-91.5px;width:300px;text-align:center;color:#ffffff;"><span class="n">1</span></div><div class="a" style="left:9.4px;top:1018.2px;width:1557px;height:7.3px;background:#545454;border-radius:4px;"></div><div class="a" style="left:10.8px;top:1019.6px;width:4.5px;height:4.5px;background:#3a3a3a;border-radius:3px;"></div><div class="a" style="left:1560px;top:1019.6px;width:4.5px;height:4.5px;background:#3a3a3a;border-radius:3px;"></div><div class="a" style="left:1570.3px;top:961px;width:2.5px;height:46px;background:#484848;border-radius:2px;"></div><svg class="a" style="left:1567.5px;top:967.5px;" width="6" height="8" viewBox="0 0 6 8"><path d="M5 0.500L1 4l4 3.500" fill="none" stroke="#8a8a8a" stroke-width="1"/></svg><svg class="a" style="left:0px;top:966px;" width="6" height="8" viewBox="0 0 6 8"><path d="M1 0.500L4.500 4 1 7.500" fill="none" stroke="#8a8a8a" stroke-width="1"/></svg><div class="a" style="left:8.4px;top:929.6px;width:31px;height:18.2px;background:#2b2b2b;border-radius:4px;border:1px solid #3f3f3f;"></div><svg class="a" style="left:11.5px;top:930.7px;" width="16" height="16" viewBox="0 0 16 16"><circle cx="8" cy="8" r="6.800" fill="#e6e6e6"/><path d="M8.500 3.800L5.500 8l3 4.200" fill="none" stroke="#303030" stroke-width="2"/></svg><svg class="a" style="left:28px;top:935.5px;" width="10" height="8" viewBox="0 0 10 8"><path d="M2.2 2.2L5 5.0L7.8 2.2" fill="none" stroke="#d8d8d8" stroke-width="1.3" stroke-linecap="round" stroke-linejoin="round"/></svg><div class="a" style="left:46.9px;top:929.6px;width:67.7px;height:18.2px;background:#2b2b2b;border-radius:4px 0 0 4px;border:1px solid #3f3f3f;"></div><div class="t" style="top:929.5px;height:20px;line-height:20px;left:53.4px;">Playback</div><svg class="a" style="left:103.5px;top:935.5px;" width="10" height="8" viewBox="0 0 10 8"><path d="M2.2 2.2L5 5.0L7.8 2.2" fill="none" stroke="#d8d8d8" stroke-width="1.3" stroke-linecap="round" stroke-linejoin="round"/></svg><div class="a" style="left:114.6px;top:929.6px;width:58.3px;height:18.2px;background:#2b2b2b;border-radius:0 4px 4px 0;border:1px solid #3f3f3f;"></div><div class="t" style="top:929.5px;height:20px;line-height:20px;left:122.3px;">Keying</div><svg class="a" style="left:162.5px;top:935.5px;" width="10" height="8" viewBox="0 0 10 8"><path d="M2.2 2.2L5 5.0L7.8 2.2" fill="none" stroke="#d8d8d8" stroke-width="1.3" stroke-linecap="round" stroke-linejoin="round"/></svg><div class="t" style="top:929.5px;height:20px;line-height:20px;left:183.4px;">View</div><div class="t" style="top:929.5px;height:20px;line-height:20px;left:223px;">Marker</div><div class="a" style="left:696px;top:929.4px;width:18.5px;height:18.6px;background:#555555;border-radius:4px 0 0 4px;"></div><svg class="a" style="left:701px;top:934.5px;" width="9" height="9" viewBox="0 0 9 9"><circle cx="4.400" cy="4.300" r="3.900" fill="#e0e0e0"/></svg><div class="a" style="left:715px;top:929.4px;width:17.2px;height:18.6px;background:#2a2a2a;border-radius:0 4px 4px 0;border:1px solid #333;"></div><svg class="a" style="left:718.8px;top:935.3px;" width="10" height="8" viewBox="0 0 10 8"><path d="M2.2 2.2L5 5.0L7.8 2.2" fill="none" stroke="#454545" stroke-width="1.3" stroke-linecap="round" stroke-linejoin="round"/></svg><div class="a" style="left:741px;top:929.4px;width:118px;height:18.6px;background:#555555;border-radius:4px;"></div><svg class="a" style="left:742.8px;top:930.7px;" width="16" height="16" viewBox="0 0 16 16"><rect x="3" y="3" width="1.800" height="10" fill="#e6e6e6"/><path d="M12.500 3v10L5.500 8z" fill="#e6e6e6"/></svg><div class="a" style="left:760.5px;top:929.4px;width:1px;height:18.6px;background:#303030;"></div><svg class="a" style="left:762.47px;top:930.7px;" width="16" height="16" viewBox="0 0 16 16"><path d="M5 3.500L9.500 8 5 12.500.500 8z" fill="#e6e6e6"/><path d="M15 4v8l-5-4z" fill="#e6e6e6"/></svg><div class="a" style="left:779.5px;top:929.4px;width:1px;height:18.6px;background:#303030;"></div><svg class="a" style="left:782.14px;top:930.7px;" width="16" height="16" viewBox="0 0 16 16"><path d="M12 2.500v11L3.500 8z" fill="#e6e6e6"/></svg><div class="a" style="left:799.5px;top:929.4px;width:1px;height:18.6px;background:#303030;"></div><svg class="a" style="left:801.81px;top:930.7px;" width="16" height="16" viewBox="0 0 16 16"><path d="M4.500 2.500v11L13 8z" fill="#e6e6e6"/></svg><div class="a" style="left:819.5px;top:929.4px;width:1px;height:18.6px;background:#303030;"></div><svg class="a" style="left:821.48px;top:930.7px;" width="16" height="16" viewBox="0 0 16 16"><path d="M11 3.500L15.500 8 11 12.500 6.500 8z" fill="#e6e6e6"/><path d="M1 4v8l5-4z" fill="#e6e6e6"/></svg><div class="a" style="left:838.5px;top:929.4px;width:1px;height:18.6px;background:#303030;"></div><svg class="a" style="left:841.15px;top:930.7px;" width="16" height="16" viewBox="0 0 16 16"><rect x="11.200" y="3" width="1.800" height="10" fill="#e6e6e6"/><path d="M3.500 3v10l7-5z" fill="#e6e6e6"/></svg><div class="a" style="left:1297.5px;top:929.6px;width:74px;height:18.2px;background:#555555;border-radius:4px;"></div><div class="t" style="top:929.5px;height:20px;line-height:20px;left:1183.5px;width:300px;text-align:center;"><span class="n">1</span></div><div class="a" style="left:1377.2px;top:929.6px;width:19px;height:18.2px;background:#555555;border-radius:4px 0 0 4px;"></div><svg class="a" style="left:1379px;top:930.5px;" width="16" height="16" viewBox="0 0 16 16"><circle cx="7.500" cy="9" r="5.300" fill="none" stroke="#e6e6e6" stroke-width="1.200"/><path d="M7.500 5.500v3.800h3M6 1.500h3M7.500 1.500v2.200M12 4l1.500-1.500" fill="none" stroke="#e6e6e6" stroke-width="1.100"/></svg><div class="a" style="left:1397px;top:929.6px;width:87px;height:18.2px;background:#555555;"></div><div class="t" style="top:929.5px;height:20px;line-height:20px;left:1412.3px;">Start</div><div class="t" style="top:929.5px;height:20px;line-height:20px;right:449.5px;"><span class="n">1</span></div><div class="a" style="left:1484.8px;top:929.6px;width:83.6px;height:18.2px;background:#555555;border-radius:0 4px 4px 0;"></div><div class="t" style="top:929.5px;height:20px;line-height:20px;left:1500.4px;">End</div><div class="t" style="top:929.5px;height:20px;line-height:20px;right:365px;"><span class="n">250</span></div></div></div><div class="a" style="left:0px;top:1029px;width:1920px;height:23px;background:#1d1d1d;"></div><svg class="a" style="left:9.5px;top:1031.5px;" width="16" height="16" viewBox="0 0 16 16"><rect x="3.500" y="1" width="9" height="14" rx="3.500" fill="none" stroke="#bdbdbd" stroke-width="1.100"/><path d="M3.500 7V4.500A3.500 3.500 0 0 1 7 1h.5v6z" fill="#bdbdbd"/></svg><svg class="a" style="left:220.7px;top:1031.5px;" width="16" height="16" viewBox="0 0 16 16"><rect x="3.500" y="1" width="9" height="14" rx="3.500" fill="none" stroke="#bdbdbd" stroke-width="1.100"/><rect x="6.800" y="2.500" width="2.400" height="5" rx="1" fill="#bdbdbd"/></svg><div class="t" style="top:1030px;height:20px;line-height:20px;left:245.6px;color:#a6a6a6;">Pan View</div><svg class="a" style="left:431px;top:1031.5px;" width="16" height="16" viewBox="0 0 16 16"><rect x="3.500" y="1" width="9" height="14" rx="3.500" fill="none" stroke="#bdbdbd" stroke-width="1.100"/><path d="M12.500 7V4.500A3.500 3.500 0 0 0 9 1h-.5v6z" fill="#bdbdbd"/></svg><div class="t" style="top:1030px;height:20px;line-height:20px;right:8px;color:#a6a6a6;"><span class="n">3.5.0</span></div><div class="a" style="left:448px;top:1049.5px;width:35px;height:3px;background:#3e3e3e;"></div><div class="a" style="left:26px;top:1050px;width:4px;height:2px;background:#c8c8c8;"></div>
</div></body></html>
